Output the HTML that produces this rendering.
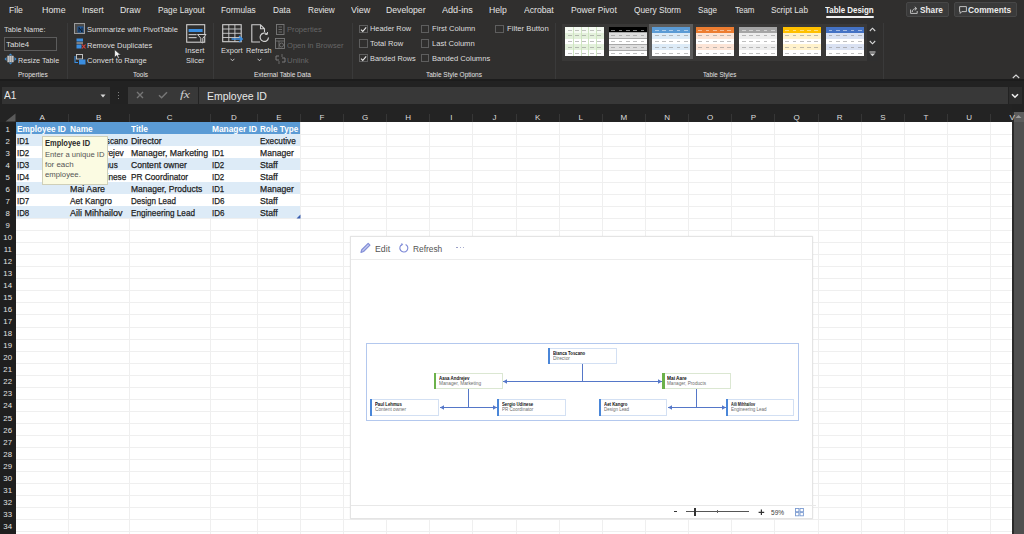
<!DOCTYPE html>
<html><head><meta charset="utf-8"><style>
html,body{margin:0;padding:0;width:1024px;height:534px;overflow:hidden;background:#302f2e;font-family:"Liberation Sans",sans-serif}
</style></head><body>
<div style="position:relative;width:1024px;height:534px;overflow:hidden">
<div style="position:absolute;left:0.00px;top:0.00px;width:1024.00px;height:80.00px;background:#302f2e"></div>
<div style="position:absolute;left:0.00px;top:80.00px;width:1024.00px;height:32.00px;background:#222222"></div>
<div style="position:absolute;left:0.00px;top:79.00px;width:1024.00px;height:1.50px;background:#1c1c1c"></div>
<div style="position:absolute;left:2.00px;top:86.80px;width:107.50px;height:17.40px;background:#333333"></div>
<div style="position:absolute;left:128.30px;top:86.80px;width:69.40px;height:17.40px;background:#383838"></div>
<div style="position:absolute;left:199.30px;top:86.80px;width:809.20px;height:17.40px;background:#383838"></div>
<div style="position:absolute;left:1008.50px;top:86.80px;width:13.50px;height:17.40px;background:#2d2d2d"></div>
<div style="position:absolute;left:0.00px;top:104.20px;width:1012.00px;height:17.80px;background:#232323"></div>
<div style="position:absolute;left:0.00px;top:122.00px;width:16.00px;height:412.00px;background:#1f1f1f"></div>
<div style="position:absolute;left:16.00px;top:122.00px;width:996.00px;height:412.00px;background:#ffffff"></div>
<div style="position:absolute;left:1012.00px;top:111.80px;width:12.00px;height:422.20px;background:#4f4f4f"></div>
<div style="position:absolute;left:1013.50px;top:111.80px;width:10.50px;height:10.20px;background:#5c5c5c"></div>
<div style="position:absolute;left:1012.00px;top:111.80px;width:1.50px;height:422.20px;background:#2a2a2a"></div>
<div style="position:absolute;left:9.01px;top:6.00px;font-family:'Liberation Sans';font-size:9.2px;font-weight:normal;font-style:normal;line-height:9.2px;color:#e4e4e4;white-space:nowrap;transform:scaleX(0.9368);transform-origin:0 0;">File</div>
<div style="position:absolute;left:41.60px;top:6.00px;font-family:'Liberation Sans';font-size:9.2px;font-weight:normal;font-style:normal;line-height:9.2px;color:#e4e4e4;white-space:nowrap;transform:scaleX(0.9625);transform-origin:0 0;">Home</div>
<div style="position:absolute;left:82.21px;top:6.00px;font-family:'Liberation Sans';font-size:9.2px;font-weight:normal;font-style:normal;line-height:9.2px;color:#e4e4e4;white-space:nowrap;transform:scaleX(0.9433);transform-origin:0 0;">Insert</div>
<div style="position:absolute;left:120.10px;top:6.00px;font-family:'Liberation Sans';font-size:9.2px;font-weight:normal;font-style:normal;line-height:9.2px;color:#e4e4e4;white-space:nowrap;transform:scaleX(0.9551);transform-origin:0 0;">Draw</div>
<div style="position:absolute;left:157.63px;top:6.00px;font-family:'Liberation Sans';font-size:9.2px;font-weight:normal;font-style:normal;line-height:9.2px;color:#e4e4e4;white-space:nowrap;transform:scaleX(0.9009);transform-origin:0 0;">Page Layout</div>
<div style="position:absolute;left:221.37px;top:6.00px;font-family:'Liberation Sans';font-size:9.2px;font-weight:normal;font-style:normal;line-height:9.2px;color:#e4e4e4;white-space:nowrap;transform:scaleX(0.9074);transform-origin:0 0;">Formulas</div>
<div style="position:absolute;left:273.38px;top:6.00px;font-family:'Liberation Sans';font-size:9.2px;font-weight:normal;font-style:normal;line-height:9.2px;color:#e4e4e4;white-space:nowrap;transform:scaleX(0.9008);transform-origin:0 0;">Data</div>
<div style="position:absolute;left:307.63px;top:6.00px;font-family:'Liberation Sans';font-size:9.2px;font-weight:normal;font-style:normal;line-height:9.2px;color:#e4e4e4;white-space:nowrap;transform:scaleX(0.8875);transform-origin:0 0;">Review</div>
<div style="position:absolute;left:350.60px;top:6.00px;font-family:'Liberation Sans';font-size:9.2px;font-weight:normal;font-style:normal;line-height:9.2px;color:#e4e4e4;white-space:nowrap;transform:scaleX(0.9777);transform-origin:0 0;">View</div>
<div style="position:absolute;left:385.86px;top:6.00px;font-family:'Liberation Sans';font-size:9.2px;font-weight:normal;font-style:normal;line-height:9.2px;color:#e4e4e4;white-space:nowrap;transform:scaleX(0.9437);transform-origin:0 0;">Developer</div>
<div style="position:absolute;left:441.59px;top:6.00px;font-family:'Liberation Sans';font-size:9.2px;font-weight:normal;font-style:normal;line-height:9.2px;color:#e4e4e4;white-space:nowrap;transform:scaleX(0.9892);transform-origin:0 0;">Add-ins</div>
<div style="position:absolute;left:488.61px;top:6.00px;font-family:'Liberation Sans';font-size:9.2px;font-weight:normal;font-style:normal;line-height:9.2px;color:#e4e4e4;white-space:nowrap;transform:scaleX(0.9404);transform-origin:0 0;">Help</div>
<div style="position:absolute;left:523.61px;top:6.00px;font-family:'Liberation Sans';font-size:9.2px;font-weight:normal;font-style:normal;line-height:9.2px;color:#e4e4e4;white-space:nowrap;transform:scaleX(0.9402);transform-origin:0 0;">Acrobat</div>
<div style="position:absolute;left:570.61px;top:6.00px;font-family:'Liberation Sans';font-size:9.2px;font-weight:normal;font-style:normal;line-height:9.2px;color:#e4e4e4;white-space:nowrap;transform:scaleX(0.9335);transform-origin:0 0;">Power Pivot</div>
<div style="position:absolute;left:634.13px;top:6.00px;font-family:'Liberation Sans';font-size:9.2px;font-weight:normal;font-style:normal;line-height:9.2px;color:#e4e4e4;white-space:nowrap;transform:scaleX(0.9024);transform-origin:0 0;">Query Storm</div>
<div style="position:absolute;left:698.38px;top:6.00px;font-family:'Liberation Sans';font-size:9.2px;font-weight:normal;font-style:normal;line-height:9.2px;color:#e4e4e4;white-space:nowrap;transform:scaleX(0.8842);transform-origin:0 0;">Sage</div>
<div style="position:absolute;left:734.64px;top:6.00px;font-family:'Liberation Sans';font-size:9.2px;font-weight:normal;font-style:normal;line-height:9.2px;color:#e4e4e4;white-space:nowrap;transform:scaleX(0.8664);transform-origin:0 0;">Team</div>
<div style="position:absolute;left:771.38px;top:6.00px;font-family:'Liberation Sans';font-size:9.2px;font-weight:normal;font-style:normal;line-height:9.2px;color:#e4e4e4;white-space:nowrap;transform:scaleX(0.8940);transform-origin:0 0;">Script Lab</div>
<div style="position:absolute;left:825.39px;top:6.00px;font-family:'Liberation Sans';font-size:9.2px;font-weight:bold;font-style:normal;line-height:9.2px;color:#f4f4f4;white-space:nowrap;transform:scaleX(0.8622);transform-origin:0 0;">Table Design</div>
<div style="position:absolute;left:825.50px;top:15.80px;width:48.50px;height:1.80px;background:#f0f0f0;border-radius:1px"></div>
<div style="position:absolute;left:905.70px;top:2.00px;width:43.20px;height:15.00px;background:#3a3a3a;border:1px solid #474747;border-radius:2px;box-sizing:border-box"></div>
<div style="position:absolute;left:953.50px;top:2.00px;width:63.50px;height:15.00px;background:#3a3a3a;border:1px solid #474747;border-radius:2px;box-sizing:border-box"></div>
<div style="position:absolute;left:920.43px;top:6.00px;font-family:'Liberation Sans';font-size:8.7px;font-weight:bold;font-style:normal;line-height:8.7px;color:#ececec;white-space:nowrap;transform:scaleX(0.9498);transform-origin:0 0;">Share</div>
<div style="position:absolute;left:968.12px;top:6.00px;font-family:'Liberation Sans';font-size:8.7px;font-weight:bold;font-style:normal;line-height:8.7px;color:#ececec;white-space:nowrap;transform:scaleX(0.9632);transform-origin:0 0;">Comments</div>
<div style="position:absolute;left:4.42px;top:26.00px;font-family:'Liberation Sans';font-size:7.6px;font-weight:normal;font-style:normal;line-height:7.6px;color:#dedede;white-space:nowrap;transform:scaleX(0.9736);transform-origin:0 0;">Table Name:</div>
<div style="position:absolute;left:4.00px;top:37.00px;width:53.00px;height:14.00px;border:1px solid #5c5c5c;background:#2d2c2b;box-sizing:border-box"></div>
<div style="position:absolute;left:5.65px;top:41.00px;font-family:'Liberation Sans';font-size:7.6px;font-weight:normal;font-style:normal;line-height:7.6px;color:#dedede;white-space:nowrap;transform:scaleX(1.0365);transform-origin:0 0;">Table4</div>
<div style="position:absolute;left:17.68px;top:57.00px;font-family:'Liberation Sans';font-size:7.6px;font-weight:normal;font-style:normal;line-height:7.6px;color:#dedede;white-space:nowrap;transform:scaleX(0.9494);transform-origin:0 0;">Resize Table</div>
<div style="position:absolute;left:18.46px;top:71.00px;font-family:'Liberation Sans';font-size:7.2px;font-weight:normal;font-style:normal;line-height:7.2px;color:#e2e2e2;white-space:nowrap;transform:scaleX(0.9076);transform-origin:0 0;">Properties</div>
<div style="position:absolute;left:67.00px;top:23.00px;width:1.00px;height:56.00px;background:#3a3a3a"></div>
<div style="position:absolute;left:86.66px;top:26.00px;font-family:'Liberation Sans';font-size:7.6px;font-weight:normal;font-style:normal;line-height:7.6px;color:#dedede;white-space:nowrap;transform:scaleX(0.9979);transform-origin:0 0;">Summarize with PivotTable</div>
<div style="position:absolute;left:86.66px;top:42.00px;font-family:'Liberation Sans';font-size:7.6px;font-weight:normal;font-style:normal;line-height:7.6px;color:#dedede;white-space:nowrap;transform:scaleX(0.9899);transform-origin:0 0;">Remove Duplicates</div>
<div style="position:absolute;left:86.66px;top:57.00px;font-family:'Liberation Sans';font-size:7.6px;font-weight:normal;font-style:normal;line-height:7.6px;color:#dedede;white-space:nowrap;transform:scaleX(1.0026);transform-origin:0 0;">Convert to Range</div>
<div style="position:absolute;left:185.25px;top:47.00px;font-family:'Liberation Sans';font-size:7.6px;font-weight:normal;font-style:normal;line-height:7.6px;color:#dedede;white-space:nowrap;transform:scaleX(1.0210);transform-origin:0 0;">Insert</div>
<div style="position:absolute;left:185.57px;top:57.00px;font-family:'Liberation Sans';font-size:7.6px;font-weight:normal;font-style:normal;line-height:7.6px;color:#dedede;white-space:nowrap;transform:scaleX(0.9773);transform-origin:0 0;">Slicer</div>
<div style="position:absolute;left:133.21px;top:71.00px;font-family:'Liberation Sans';font-size:7.2px;font-weight:normal;font-style:normal;line-height:7.2px;color:#e2e2e2;white-space:nowrap;transform:scaleX(0.8988);transform-origin:0 0;">Tools</div>
<div style="position:absolute;left:212.50px;top:23.00px;width:1.00px;height:56.00px;background:#3a3a3a"></div>
<div style="position:absolute;left:220.66px;top:47.00px;font-family:'Liberation Sans';font-size:7.6px;font-weight:normal;font-style:normal;line-height:7.6px;color:#dedede;white-space:nowrap;transform:scaleX(0.9873);transform-origin:0 0;">Export</div>
<div style="position:absolute;left:245.67px;top:47.00px;font-family:'Liberation Sans';font-size:7.6px;font-weight:normal;font-style:normal;line-height:7.6px;color:#dedede;white-space:nowrap;transform:scaleX(0.9649);transform-origin:0 0;">Refresh</div>
<div style="position:absolute;left:286.56px;top:26.00px;font-family:'Liberation Sans';font-size:7.6px;font-weight:normal;font-style:normal;line-height:7.6px;color:#666;white-space:nowrap;transform:scaleX(1.0047);transform-origin:0 0;">Properties</div>
<div style="position:absolute;left:286.66px;top:42.00px;font-family:'Liberation Sans';font-size:7.6px;font-weight:normal;font-style:normal;line-height:7.6px;color:#666;white-space:nowrap;transform:scaleX(0.9986);transform-origin:0 0;">Open in Browser</div>
<div style="position:absolute;left:286.65px;top:57.00px;font-family:'Liberation Sans';font-size:7.6px;font-weight:normal;font-style:normal;line-height:7.6px;color:#666;white-space:nowrap;transform:scaleX(1.0281);transform-origin:0 0;">Unlink</div>
<div style="position:absolute;left:254.21px;top:71.00px;font-family:'Liberation Sans';font-size:7.2px;font-weight:normal;font-style:normal;line-height:7.2px;color:#e2e2e2;white-space:nowrap;transform:scaleX(0.9086);transform-origin:0 0;">External Table Data</div>
<div style="position:absolute;left:351.50px;top:23.00px;width:1.00px;height:56.00px;background:#3a3a3a"></div>
<div style="position:absolute;left:370.17px;top:25.00px;font-family:'Liberation Sans';font-size:7.6px;font-weight:normal;font-style:normal;line-height:7.6px;color:#dedede;white-space:nowrap;transform:scaleX(0.9751);transform-origin:0 0;">Header Row</div>
<div style="position:absolute;left:370.16px;top:40.00px;font-family:'Liberation Sans';font-size:7.6px;font-weight:normal;font-style:normal;line-height:7.6px;color:#dedede;white-space:nowrap;transform:scaleX(0.9951);transform-origin:0 0;">Total Row</div>
<div style="position:absolute;left:370.17px;top:55.00px;font-family:'Liberation Sans';font-size:7.6px;font-weight:normal;font-style:normal;line-height:7.6px;color:#dedede;white-space:nowrap;transform:scaleX(0.9679);transform-origin:0 0;">Banded Rows</div>
<div style="position:absolute;left:431.66px;top:25.00px;font-family:'Liberation Sans';font-size:7.6px;font-weight:normal;font-style:normal;line-height:7.6px;color:#dedede;white-space:nowrap;transform:scaleX(1.0080);transform-origin:0 0;">First Column</div>
<div style="position:absolute;left:431.66px;top:40.00px;font-family:'Liberation Sans';font-size:7.6px;font-weight:normal;font-style:normal;line-height:7.6px;color:#dedede;white-space:nowrap;transform:scaleX(1.0010);transform-origin:0 0;">Last Column</div>
<div style="position:absolute;left:431.66px;top:55.00px;font-family:'Liberation Sans';font-size:7.6px;font-weight:normal;font-style:normal;line-height:7.6px;color:#dedede;white-space:nowrap;transform:scaleX(0.9986);transform-origin:0 0;">Banded Columns</div>
<div style="position:absolute;left:506.65px;top:25.00px;font-family:'Liberation Sans';font-size:7.6px;font-weight:normal;font-style:normal;line-height:7.6px;color:#dedede;white-space:nowrap;transform:scaleX(1.0181);transform-origin:0 0;">Filter Button</div>
<div style="position:absolute;left:426.01px;top:71.00px;font-family:'Liberation Sans';font-size:7.2px;font-weight:normal;font-style:normal;line-height:7.2px;color:#e2e2e2;white-space:nowrap;transform:scaleX(0.9039);transform-origin:0 0;">Table Style Options</div>
<div style="position:absolute;left:359.20px;top:24.60px;width:8.50px;height:8.50px;border:1px solid #5e5e5e;box-sizing:border-box"></div>
<svg style="position:absolute;left:359.2px;top:24.6px" width="9" height="9" viewBox="0 0 9 9"><path d="M2 4.6 L3.8 6.4 L7.2 2.4" stroke="#e8e8e8" stroke-width="1.1" fill="none"/></svg>
<div style="position:absolute;left:359.20px;top:39.00px;width:8.50px;height:8.50px;border:1px solid #5e5e5e;box-sizing:border-box"></div>
<div style="position:absolute;left:359.20px;top:53.90px;width:8.50px;height:8.50px;border:1px solid #5e5e5e;box-sizing:border-box"></div>
<svg style="position:absolute;left:359.2px;top:53.9px" width="9" height="9" viewBox="0 0 9 9"><path d="M2 4.6 L3.8 6.4 L7.2 2.4" stroke="#e8e8e8" stroke-width="1.1" fill="none"/></svg>
<div style="position:absolute;left:420.80px;top:24.60px;width:8.50px;height:8.50px;border:1px solid #5e5e5e;box-sizing:border-box"></div>
<div style="position:absolute;left:420.80px;top:39.00px;width:8.50px;height:8.50px;border:1px solid #5e5e5e;box-sizing:border-box"></div>
<div style="position:absolute;left:420.80px;top:53.90px;width:8.50px;height:8.50px;border:1px solid #5e5e5e;box-sizing:border-box"></div>
<div style="position:absolute;left:495.00px;top:24.60px;width:8.50px;height:8.50px;border:1px solid #5e5e5e;box-sizing:border-box"></div>
<div style="position:absolute;left:555.00px;top:23.00px;width:1.00px;height:56.00px;background:#3a3a3a"></div>
<div style="position:absolute;left:561.70px;top:23.50px;width:305.30px;height:37.00px;background:#393837"></div>
<div style="position:absolute;left:867.00px;top:23.50px;width:10.60px;height:37.00px;background:#2f2f2f"></div>
<div style="position:absolute;left:649.40px;top:24.10px;width:43.50px;height:34.50px;background:#5c5c5c"></div>
<div style="position:absolute;left:703.02px;top:71.00px;font-family:'Liberation Sans';font-size:7.2px;font-weight:normal;font-style:normal;line-height:7.2px;color:#e2e2e2;white-space:nowrap;transform:scaleX(0.8579);transform-origin:0 0;">Table Styles</div>
<div style="position:absolute;left:883.00px;top:23.00px;width:1.00px;height:56.00px;background:#3a3a3a"></div>
<div style="position:absolute;left:565.3px;top:27.2px;width:38.3px;height:28.8px;background:#fff;overflow:hidden"><div style="position:absolute;left:0;top:0.00px;width:38.3px;height:5.60px;background:#f6fbf3"></div><div style="position:absolute;left:2.60px;top:2.40px;width:3.8px;height:0.8px;background:#8a8a8a;opacity:.5"></div><div style="position:absolute;left:9.90px;top:2.40px;width:3.8px;height:0.8px;background:#8a8a8a;opacity:.5"></div><div style="position:absolute;left:17.20px;top:2.40px;width:3.8px;height:0.8px;background:#8a8a8a;opacity:.5"></div><div style="position:absolute;left:24.50px;top:2.40px;width:3.8px;height:0.8px;background:#8a8a8a;opacity:.5"></div><div style="position:absolute;left:31.80px;top:2.40px;width:3.8px;height:0.8px;background:#8a8a8a;opacity:.5"></div><div style="position:absolute;left:0;top:5.60px;width:38.3px;height:5.80px;background:#e4f1dc"></div><div style="position:absolute;left:2.60px;top:8.10px;width:3.8px;height:0.8px;background:#8a8a8a;opacity:.55"></div><div style="position:absolute;left:9.90px;top:8.10px;width:3.8px;height:0.8px;background:#8a8a8a;opacity:.55"></div><div style="position:absolute;left:17.20px;top:8.10px;width:3.8px;height:0.8px;background:#8a8a8a;opacity:.55"></div><div style="position:absolute;left:24.50px;top:8.10px;width:3.8px;height:0.8px;background:#8a8a8a;opacity:.55"></div><div style="position:absolute;left:31.80px;top:8.10px;width:3.8px;height:0.8px;background:#8a8a8a;opacity:.55"></div><div style="position:absolute;left:0;top:11.40px;width:38.3px;height:5.80px;background:#fff"></div><div style="position:absolute;left:2.60px;top:13.90px;width:3.8px;height:0.8px;background:#8a8a8a;opacity:.55"></div><div style="position:absolute;left:9.90px;top:13.90px;width:3.8px;height:0.8px;background:#8a8a8a;opacity:.55"></div><div style="position:absolute;left:17.20px;top:13.90px;width:3.8px;height:0.8px;background:#8a8a8a;opacity:.55"></div><div style="position:absolute;left:24.50px;top:13.90px;width:3.8px;height:0.8px;background:#8a8a8a;opacity:.55"></div><div style="position:absolute;left:31.80px;top:13.90px;width:3.8px;height:0.8px;background:#8a8a8a;opacity:.55"></div><div style="position:absolute;left:0;top:17.20px;width:38.3px;height:5.80px;background:#e4f1dc"></div><div style="position:absolute;left:2.60px;top:19.70px;width:3.8px;height:0.8px;background:#8a8a8a;opacity:.55"></div><div style="position:absolute;left:9.90px;top:19.70px;width:3.8px;height:0.8px;background:#8a8a8a;opacity:.55"></div><div style="position:absolute;left:17.20px;top:19.70px;width:3.8px;height:0.8px;background:#8a8a8a;opacity:.55"></div><div style="position:absolute;left:24.50px;top:19.70px;width:3.8px;height:0.8px;background:#8a8a8a;opacity:.55"></div><div style="position:absolute;left:31.80px;top:19.70px;width:3.8px;height:0.8px;background:#8a8a8a;opacity:.55"></div><div style="position:absolute;left:0;top:23.00px;width:38.3px;height:5.80px;background:#fff"></div><div style="position:absolute;left:2.60px;top:25.50px;width:3.8px;height:0.8px;background:#8a8a8a;opacity:.55"></div><div style="position:absolute;left:9.90px;top:25.50px;width:3.8px;height:0.8px;background:#8a8a8a;opacity:.55"></div><div style="position:absolute;left:17.20px;top:25.50px;width:3.8px;height:0.8px;background:#8a8a8a;opacity:.55"></div><div style="position:absolute;left:24.50px;top:25.50px;width:3.8px;height:0.8px;background:#8a8a8a;opacity:.55"></div><div style="position:absolute;left:31.80px;top:25.50px;width:3.8px;height:0.8px;background:#8a8a8a;opacity:.55"></div><div style="position:absolute;left:7.66px;top:0;width:0.8px;height:28.8px;background:#cfe5c1"></div><div style="position:absolute;left:15.32px;top:0;width:0.8px;height:28.8px;background:#cfe5c1"></div><div style="position:absolute;left:22.98px;top:0;width:0.8px;height:28.8px;background:#cfe5c1"></div><div style="position:absolute;left:30.64px;top:0;width:0.8px;height:28.8px;background:#cfe5c1"></div></div>
<div style="position:absolute;left:608.8px;top:27.2px;width:38.3px;height:28.8px;background:#fff;overflow:hidden"><div style="position:absolute;left:0;top:0.00px;width:38.3px;height:5.60px;background:#000000"></div><div style="position:absolute;left:2.60px;top:2.40px;width:3.8px;height:0.8px;background:#ffffff;opacity:.5"></div><div style="position:absolute;left:9.90px;top:2.40px;width:3.8px;height:0.8px;background:#ffffff;opacity:.5"></div><div style="position:absolute;left:17.20px;top:2.40px;width:3.8px;height:0.8px;background:#ffffff;opacity:.5"></div><div style="position:absolute;left:24.50px;top:2.40px;width:3.8px;height:0.8px;background:#ffffff;opacity:.5"></div><div style="position:absolute;left:31.80px;top:2.40px;width:3.8px;height:0.8px;background:#ffffff;opacity:.5"></div><div style="position:absolute;left:0;top:5.60px;width:38.3px;height:5.80px;background:#dedede"></div><div style="position:absolute;left:0;top:5.20px;width:38.3px;height:0.8px;background:#a8a8a8"></div><div style="position:absolute;left:2.60px;top:8.10px;width:3.8px;height:0.8px;background:#8a8a8a;opacity:.55"></div><div style="position:absolute;left:9.90px;top:8.10px;width:3.8px;height:0.8px;background:#8a8a8a;opacity:.55"></div><div style="position:absolute;left:17.20px;top:8.10px;width:3.8px;height:0.8px;background:#8a8a8a;opacity:.55"></div><div style="position:absolute;left:24.50px;top:8.10px;width:3.8px;height:0.8px;background:#8a8a8a;opacity:.55"></div><div style="position:absolute;left:31.80px;top:8.10px;width:3.8px;height:0.8px;background:#8a8a8a;opacity:.55"></div><div style="position:absolute;left:0;top:11.40px;width:38.3px;height:5.80px;background:#fff"></div><div style="position:absolute;left:0;top:11.00px;width:38.3px;height:0.8px;background:#a8a8a8"></div><div style="position:absolute;left:2.60px;top:13.90px;width:3.8px;height:0.8px;background:#8a8a8a;opacity:.55"></div><div style="position:absolute;left:9.90px;top:13.90px;width:3.8px;height:0.8px;background:#8a8a8a;opacity:.55"></div><div style="position:absolute;left:17.20px;top:13.90px;width:3.8px;height:0.8px;background:#8a8a8a;opacity:.55"></div><div style="position:absolute;left:24.50px;top:13.90px;width:3.8px;height:0.8px;background:#8a8a8a;opacity:.55"></div><div style="position:absolute;left:31.80px;top:13.90px;width:3.8px;height:0.8px;background:#8a8a8a;opacity:.55"></div><div style="position:absolute;left:0;top:17.20px;width:38.3px;height:5.80px;background:#dedede"></div><div style="position:absolute;left:0;top:16.80px;width:38.3px;height:0.8px;background:#a8a8a8"></div><div style="position:absolute;left:2.60px;top:19.70px;width:3.8px;height:0.8px;background:#8a8a8a;opacity:.55"></div><div style="position:absolute;left:9.90px;top:19.70px;width:3.8px;height:0.8px;background:#8a8a8a;opacity:.55"></div><div style="position:absolute;left:17.20px;top:19.70px;width:3.8px;height:0.8px;background:#8a8a8a;opacity:.55"></div><div style="position:absolute;left:24.50px;top:19.70px;width:3.8px;height:0.8px;background:#8a8a8a;opacity:.55"></div><div style="position:absolute;left:31.80px;top:19.70px;width:3.8px;height:0.8px;background:#8a8a8a;opacity:.55"></div><div style="position:absolute;left:0;top:23.00px;width:38.3px;height:5.80px;background:#fff"></div><div style="position:absolute;left:0;top:22.60px;width:38.3px;height:0.8px;background:#a8a8a8"></div><div style="position:absolute;left:2.60px;top:25.50px;width:3.8px;height:0.8px;background:#8a8a8a;opacity:.55"></div><div style="position:absolute;left:9.90px;top:25.50px;width:3.8px;height:0.8px;background:#8a8a8a;opacity:.55"></div><div style="position:absolute;left:17.20px;top:25.50px;width:3.8px;height:0.8px;background:#8a8a8a;opacity:.55"></div><div style="position:absolute;left:24.50px;top:25.50px;width:3.8px;height:0.8px;background:#8a8a8a;opacity:.55"></div><div style="position:absolute;left:31.80px;top:25.50px;width:3.8px;height:0.8px;background:#8a8a8a;opacity:.55"></div></div>
<div style="position:absolute;left:652.2px;top:27.2px;width:38.3px;height:28.8px;background:#fff;overflow:hidden"><div style="position:absolute;left:0;top:0.00px;width:38.3px;height:5.60px;background:#5b9bd5"></div><div style="position:absolute;left:2.60px;top:2.40px;width:3.8px;height:0.8px;background:#ffffff;opacity:.5"></div><div style="position:absolute;left:9.90px;top:2.40px;width:3.8px;height:0.8px;background:#ffffff;opacity:.5"></div><div style="position:absolute;left:17.20px;top:2.40px;width:3.8px;height:0.8px;background:#ffffff;opacity:.5"></div><div style="position:absolute;left:24.50px;top:2.40px;width:3.8px;height:0.8px;background:#ffffff;opacity:.5"></div><div style="position:absolute;left:31.80px;top:2.40px;width:3.8px;height:0.8px;background:#ffffff;opacity:.5"></div><div style="position:absolute;left:0;top:5.60px;width:38.3px;height:5.80px;background:#ddebf7"></div><div style="position:absolute;left:2.60px;top:8.10px;width:3.8px;height:0.8px;background:#8a8a8a;opacity:.55"></div><div style="position:absolute;left:9.90px;top:8.10px;width:3.8px;height:0.8px;background:#8a8a8a;opacity:.55"></div><div style="position:absolute;left:17.20px;top:8.10px;width:3.8px;height:0.8px;background:#8a8a8a;opacity:.55"></div><div style="position:absolute;left:24.50px;top:8.10px;width:3.8px;height:0.8px;background:#8a8a8a;opacity:.55"></div><div style="position:absolute;left:31.80px;top:8.10px;width:3.8px;height:0.8px;background:#8a8a8a;opacity:.55"></div><div style="position:absolute;left:0;top:11.40px;width:38.3px;height:5.80px;background:#fff"></div><div style="position:absolute;left:2.60px;top:13.90px;width:3.8px;height:0.8px;background:#8a8a8a;opacity:.55"></div><div style="position:absolute;left:9.90px;top:13.90px;width:3.8px;height:0.8px;background:#8a8a8a;opacity:.55"></div><div style="position:absolute;left:17.20px;top:13.90px;width:3.8px;height:0.8px;background:#8a8a8a;opacity:.55"></div><div style="position:absolute;left:24.50px;top:13.90px;width:3.8px;height:0.8px;background:#8a8a8a;opacity:.55"></div><div style="position:absolute;left:31.80px;top:13.90px;width:3.8px;height:0.8px;background:#8a8a8a;opacity:.55"></div><div style="position:absolute;left:0;top:17.20px;width:38.3px;height:5.80px;background:#ddebf7"></div><div style="position:absolute;left:2.60px;top:19.70px;width:3.8px;height:0.8px;background:#8a8a8a;opacity:.55"></div><div style="position:absolute;left:9.90px;top:19.70px;width:3.8px;height:0.8px;background:#8a8a8a;opacity:.55"></div><div style="position:absolute;left:17.20px;top:19.70px;width:3.8px;height:0.8px;background:#8a8a8a;opacity:.55"></div><div style="position:absolute;left:24.50px;top:19.70px;width:3.8px;height:0.8px;background:#8a8a8a;opacity:.55"></div><div style="position:absolute;left:31.80px;top:19.70px;width:3.8px;height:0.8px;background:#8a8a8a;opacity:.55"></div><div style="position:absolute;left:0;top:23.00px;width:38.3px;height:5.80px;background:#fff"></div><div style="position:absolute;left:2.60px;top:25.50px;width:3.8px;height:0.8px;background:#8a8a8a;opacity:.55"></div><div style="position:absolute;left:9.90px;top:25.50px;width:3.8px;height:0.8px;background:#8a8a8a;opacity:.55"></div><div style="position:absolute;left:17.20px;top:25.50px;width:3.8px;height:0.8px;background:#8a8a8a;opacity:.55"></div><div style="position:absolute;left:24.50px;top:25.50px;width:3.8px;height:0.8px;background:#8a8a8a;opacity:.55"></div><div style="position:absolute;left:31.80px;top:25.50px;width:3.8px;height:0.8px;background:#8a8a8a;opacity:.55"></div></div>
<div style="position:absolute;left:695.7px;top:27.2px;width:38.3px;height:28.8px;background:#fff;overflow:hidden"><div style="position:absolute;left:0;top:0.00px;width:38.3px;height:5.60px;background:#ed7d31"></div><div style="position:absolute;left:2.60px;top:2.40px;width:3.8px;height:0.8px;background:#ffffff;opacity:.5"></div><div style="position:absolute;left:9.90px;top:2.40px;width:3.8px;height:0.8px;background:#ffffff;opacity:.5"></div><div style="position:absolute;left:17.20px;top:2.40px;width:3.8px;height:0.8px;background:#ffffff;opacity:.5"></div><div style="position:absolute;left:24.50px;top:2.40px;width:3.8px;height:0.8px;background:#ffffff;opacity:.5"></div><div style="position:absolute;left:31.80px;top:2.40px;width:3.8px;height:0.8px;background:#ffffff;opacity:.5"></div><div style="position:absolute;left:0;top:5.60px;width:38.3px;height:5.80px;background:#fce4d6"></div><div style="position:absolute;left:2.60px;top:8.10px;width:3.8px;height:0.8px;background:#8a8a8a;opacity:.55"></div><div style="position:absolute;left:9.90px;top:8.10px;width:3.8px;height:0.8px;background:#8a8a8a;opacity:.55"></div><div style="position:absolute;left:17.20px;top:8.10px;width:3.8px;height:0.8px;background:#8a8a8a;opacity:.55"></div><div style="position:absolute;left:24.50px;top:8.10px;width:3.8px;height:0.8px;background:#8a8a8a;opacity:.55"></div><div style="position:absolute;left:31.80px;top:8.10px;width:3.8px;height:0.8px;background:#8a8a8a;opacity:.55"></div><div style="position:absolute;left:0;top:11.40px;width:38.3px;height:5.80px;background:#fff"></div><div style="position:absolute;left:2.60px;top:13.90px;width:3.8px;height:0.8px;background:#8a8a8a;opacity:.55"></div><div style="position:absolute;left:9.90px;top:13.90px;width:3.8px;height:0.8px;background:#8a8a8a;opacity:.55"></div><div style="position:absolute;left:17.20px;top:13.90px;width:3.8px;height:0.8px;background:#8a8a8a;opacity:.55"></div><div style="position:absolute;left:24.50px;top:13.90px;width:3.8px;height:0.8px;background:#8a8a8a;opacity:.55"></div><div style="position:absolute;left:31.80px;top:13.90px;width:3.8px;height:0.8px;background:#8a8a8a;opacity:.55"></div><div style="position:absolute;left:0;top:17.20px;width:38.3px;height:5.80px;background:#fce4d6"></div><div style="position:absolute;left:2.60px;top:19.70px;width:3.8px;height:0.8px;background:#8a8a8a;opacity:.55"></div><div style="position:absolute;left:9.90px;top:19.70px;width:3.8px;height:0.8px;background:#8a8a8a;opacity:.55"></div><div style="position:absolute;left:17.20px;top:19.70px;width:3.8px;height:0.8px;background:#8a8a8a;opacity:.55"></div><div style="position:absolute;left:24.50px;top:19.70px;width:3.8px;height:0.8px;background:#8a8a8a;opacity:.55"></div><div style="position:absolute;left:31.80px;top:19.70px;width:3.8px;height:0.8px;background:#8a8a8a;opacity:.55"></div><div style="position:absolute;left:0;top:23.00px;width:38.3px;height:5.80px;background:#fff"></div><div style="position:absolute;left:2.60px;top:25.50px;width:3.8px;height:0.8px;background:#8a8a8a;opacity:.55"></div><div style="position:absolute;left:9.90px;top:25.50px;width:3.8px;height:0.8px;background:#8a8a8a;opacity:.55"></div><div style="position:absolute;left:17.20px;top:25.50px;width:3.8px;height:0.8px;background:#8a8a8a;opacity:.55"></div><div style="position:absolute;left:24.50px;top:25.50px;width:3.8px;height:0.8px;background:#8a8a8a;opacity:.55"></div><div style="position:absolute;left:31.80px;top:25.50px;width:3.8px;height:0.8px;background:#8a8a8a;opacity:.55"></div></div>
<div style="position:absolute;left:739.2px;top:27.2px;width:38.3px;height:28.8px;background:#fff;overflow:hidden"><div style="position:absolute;left:0;top:0.00px;width:38.3px;height:5.60px;background:#a5a5a5"></div><div style="position:absolute;left:2.60px;top:2.40px;width:3.8px;height:0.8px;background:#ffffff;opacity:.5"></div><div style="position:absolute;left:9.90px;top:2.40px;width:3.8px;height:0.8px;background:#ffffff;opacity:.5"></div><div style="position:absolute;left:17.20px;top:2.40px;width:3.8px;height:0.8px;background:#ffffff;opacity:.5"></div><div style="position:absolute;left:24.50px;top:2.40px;width:3.8px;height:0.8px;background:#ffffff;opacity:.5"></div><div style="position:absolute;left:31.80px;top:2.40px;width:3.8px;height:0.8px;background:#ffffff;opacity:.5"></div><div style="position:absolute;left:0;top:5.60px;width:38.3px;height:5.80px;background:#ededed"></div><div style="position:absolute;left:2.60px;top:8.10px;width:3.8px;height:0.8px;background:#8a8a8a;opacity:.55"></div><div style="position:absolute;left:9.90px;top:8.10px;width:3.8px;height:0.8px;background:#8a8a8a;opacity:.55"></div><div style="position:absolute;left:17.20px;top:8.10px;width:3.8px;height:0.8px;background:#8a8a8a;opacity:.55"></div><div style="position:absolute;left:24.50px;top:8.10px;width:3.8px;height:0.8px;background:#8a8a8a;opacity:.55"></div><div style="position:absolute;left:31.80px;top:8.10px;width:3.8px;height:0.8px;background:#8a8a8a;opacity:.55"></div><div style="position:absolute;left:0;top:11.40px;width:38.3px;height:5.80px;background:#fff"></div><div style="position:absolute;left:2.60px;top:13.90px;width:3.8px;height:0.8px;background:#8a8a8a;opacity:.55"></div><div style="position:absolute;left:9.90px;top:13.90px;width:3.8px;height:0.8px;background:#8a8a8a;opacity:.55"></div><div style="position:absolute;left:17.20px;top:13.90px;width:3.8px;height:0.8px;background:#8a8a8a;opacity:.55"></div><div style="position:absolute;left:24.50px;top:13.90px;width:3.8px;height:0.8px;background:#8a8a8a;opacity:.55"></div><div style="position:absolute;left:31.80px;top:13.90px;width:3.8px;height:0.8px;background:#8a8a8a;opacity:.55"></div><div style="position:absolute;left:0;top:17.20px;width:38.3px;height:5.80px;background:#ededed"></div><div style="position:absolute;left:2.60px;top:19.70px;width:3.8px;height:0.8px;background:#8a8a8a;opacity:.55"></div><div style="position:absolute;left:9.90px;top:19.70px;width:3.8px;height:0.8px;background:#8a8a8a;opacity:.55"></div><div style="position:absolute;left:17.20px;top:19.70px;width:3.8px;height:0.8px;background:#8a8a8a;opacity:.55"></div><div style="position:absolute;left:24.50px;top:19.70px;width:3.8px;height:0.8px;background:#8a8a8a;opacity:.55"></div><div style="position:absolute;left:31.80px;top:19.70px;width:3.8px;height:0.8px;background:#8a8a8a;opacity:.55"></div><div style="position:absolute;left:0;top:23.00px;width:38.3px;height:5.80px;background:#fff"></div><div style="position:absolute;left:2.60px;top:25.50px;width:3.8px;height:0.8px;background:#8a8a8a;opacity:.55"></div><div style="position:absolute;left:9.90px;top:25.50px;width:3.8px;height:0.8px;background:#8a8a8a;opacity:.55"></div><div style="position:absolute;left:17.20px;top:25.50px;width:3.8px;height:0.8px;background:#8a8a8a;opacity:.55"></div><div style="position:absolute;left:24.50px;top:25.50px;width:3.8px;height:0.8px;background:#8a8a8a;opacity:.55"></div><div style="position:absolute;left:31.80px;top:25.50px;width:3.8px;height:0.8px;background:#8a8a8a;opacity:.55"></div></div>
<div style="position:absolute;left:782.7px;top:27.2px;width:38.3px;height:28.8px;background:#fff;overflow:hidden"><div style="position:absolute;left:0;top:0.00px;width:38.3px;height:5.60px;background:#ffc000"></div><div style="position:absolute;left:2.60px;top:2.40px;width:3.8px;height:0.8px;background:#ffffff;opacity:.5"></div><div style="position:absolute;left:9.90px;top:2.40px;width:3.8px;height:0.8px;background:#ffffff;opacity:.5"></div><div style="position:absolute;left:17.20px;top:2.40px;width:3.8px;height:0.8px;background:#ffffff;opacity:.5"></div><div style="position:absolute;left:24.50px;top:2.40px;width:3.8px;height:0.8px;background:#ffffff;opacity:.5"></div><div style="position:absolute;left:31.80px;top:2.40px;width:3.8px;height:0.8px;background:#ffffff;opacity:.5"></div><div style="position:absolute;left:0;top:5.60px;width:38.3px;height:5.80px;background:#fff2cc"></div><div style="position:absolute;left:2.60px;top:8.10px;width:3.8px;height:0.8px;background:#8a8a8a;opacity:.55"></div><div style="position:absolute;left:9.90px;top:8.10px;width:3.8px;height:0.8px;background:#8a8a8a;opacity:.55"></div><div style="position:absolute;left:17.20px;top:8.10px;width:3.8px;height:0.8px;background:#8a8a8a;opacity:.55"></div><div style="position:absolute;left:24.50px;top:8.10px;width:3.8px;height:0.8px;background:#8a8a8a;opacity:.55"></div><div style="position:absolute;left:31.80px;top:8.10px;width:3.8px;height:0.8px;background:#8a8a8a;opacity:.55"></div><div style="position:absolute;left:0;top:11.40px;width:38.3px;height:5.80px;background:#fff"></div><div style="position:absolute;left:2.60px;top:13.90px;width:3.8px;height:0.8px;background:#8a8a8a;opacity:.55"></div><div style="position:absolute;left:9.90px;top:13.90px;width:3.8px;height:0.8px;background:#8a8a8a;opacity:.55"></div><div style="position:absolute;left:17.20px;top:13.90px;width:3.8px;height:0.8px;background:#8a8a8a;opacity:.55"></div><div style="position:absolute;left:24.50px;top:13.90px;width:3.8px;height:0.8px;background:#8a8a8a;opacity:.55"></div><div style="position:absolute;left:31.80px;top:13.90px;width:3.8px;height:0.8px;background:#8a8a8a;opacity:.55"></div><div style="position:absolute;left:0;top:17.20px;width:38.3px;height:5.80px;background:#fff2cc"></div><div style="position:absolute;left:2.60px;top:19.70px;width:3.8px;height:0.8px;background:#8a8a8a;opacity:.55"></div><div style="position:absolute;left:9.90px;top:19.70px;width:3.8px;height:0.8px;background:#8a8a8a;opacity:.55"></div><div style="position:absolute;left:17.20px;top:19.70px;width:3.8px;height:0.8px;background:#8a8a8a;opacity:.55"></div><div style="position:absolute;left:24.50px;top:19.70px;width:3.8px;height:0.8px;background:#8a8a8a;opacity:.55"></div><div style="position:absolute;left:31.80px;top:19.70px;width:3.8px;height:0.8px;background:#8a8a8a;opacity:.55"></div><div style="position:absolute;left:0;top:23.00px;width:38.3px;height:5.80px;background:#fff"></div><div style="position:absolute;left:2.60px;top:25.50px;width:3.8px;height:0.8px;background:#8a8a8a;opacity:.55"></div><div style="position:absolute;left:9.90px;top:25.50px;width:3.8px;height:0.8px;background:#8a8a8a;opacity:.55"></div><div style="position:absolute;left:17.20px;top:25.50px;width:3.8px;height:0.8px;background:#8a8a8a;opacity:.55"></div><div style="position:absolute;left:24.50px;top:25.50px;width:3.8px;height:0.8px;background:#8a8a8a;opacity:.55"></div><div style="position:absolute;left:31.80px;top:25.50px;width:3.8px;height:0.8px;background:#8a8a8a;opacity:.55"></div></div>
<div style="position:absolute;left:826.0px;top:27.2px;width:38.3px;height:28.8px;background:#fff;overflow:hidden"><div style="position:absolute;left:0;top:0.00px;width:38.3px;height:5.60px;background:#4472c4"></div><div style="position:absolute;left:2.60px;top:2.40px;width:3.8px;height:0.8px;background:#ffffff;opacity:.5"></div><div style="position:absolute;left:9.90px;top:2.40px;width:3.8px;height:0.8px;background:#ffffff;opacity:.5"></div><div style="position:absolute;left:17.20px;top:2.40px;width:3.8px;height:0.8px;background:#ffffff;opacity:.5"></div><div style="position:absolute;left:24.50px;top:2.40px;width:3.8px;height:0.8px;background:#ffffff;opacity:.5"></div><div style="position:absolute;left:31.80px;top:2.40px;width:3.8px;height:0.8px;background:#ffffff;opacity:.5"></div><div style="position:absolute;left:0;top:5.60px;width:38.3px;height:5.80px;background:#d9e1f2"></div><div style="position:absolute;left:2.60px;top:8.10px;width:3.8px;height:0.8px;background:#8a8a8a;opacity:.55"></div><div style="position:absolute;left:9.90px;top:8.10px;width:3.8px;height:0.8px;background:#8a8a8a;opacity:.55"></div><div style="position:absolute;left:17.20px;top:8.10px;width:3.8px;height:0.8px;background:#8a8a8a;opacity:.55"></div><div style="position:absolute;left:24.50px;top:8.10px;width:3.8px;height:0.8px;background:#8a8a8a;opacity:.55"></div><div style="position:absolute;left:31.80px;top:8.10px;width:3.8px;height:0.8px;background:#8a8a8a;opacity:.55"></div><div style="position:absolute;left:0;top:11.40px;width:38.3px;height:5.80px;background:#fff"></div><div style="position:absolute;left:2.60px;top:13.90px;width:3.8px;height:0.8px;background:#8a8a8a;opacity:.55"></div><div style="position:absolute;left:9.90px;top:13.90px;width:3.8px;height:0.8px;background:#8a8a8a;opacity:.55"></div><div style="position:absolute;left:17.20px;top:13.90px;width:3.8px;height:0.8px;background:#8a8a8a;opacity:.55"></div><div style="position:absolute;left:24.50px;top:13.90px;width:3.8px;height:0.8px;background:#8a8a8a;opacity:.55"></div><div style="position:absolute;left:31.80px;top:13.90px;width:3.8px;height:0.8px;background:#8a8a8a;opacity:.55"></div><div style="position:absolute;left:0;top:17.20px;width:38.3px;height:5.80px;background:#d9e1f2"></div><div style="position:absolute;left:2.60px;top:19.70px;width:3.8px;height:0.8px;background:#8a8a8a;opacity:.55"></div><div style="position:absolute;left:9.90px;top:19.70px;width:3.8px;height:0.8px;background:#8a8a8a;opacity:.55"></div><div style="position:absolute;left:17.20px;top:19.70px;width:3.8px;height:0.8px;background:#8a8a8a;opacity:.55"></div><div style="position:absolute;left:24.50px;top:19.70px;width:3.8px;height:0.8px;background:#8a8a8a;opacity:.55"></div><div style="position:absolute;left:31.80px;top:19.70px;width:3.8px;height:0.8px;background:#8a8a8a;opacity:.55"></div><div style="position:absolute;left:0;top:23.00px;width:38.3px;height:5.80px;background:#fff"></div><div style="position:absolute;left:2.60px;top:25.50px;width:3.8px;height:0.8px;background:#8a8a8a;opacity:.55"></div><div style="position:absolute;left:9.90px;top:25.50px;width:3.8px;height:0.8px;background:#8a8a8a;opacity:.55"></div><div style="position:absolute;left:17.20px;top:25.50px;width:3.8px;height:0.8px;background:#8a8a8a;opacity:.55"></div><div style="position:absolute;left:24.50px;top:25.50px;width:3.8px;height:0.8px;background:#8a8a8a;opacity:.55"></div><div style="position:absolute;left:31.80px;top:25.50px;width:3.8px;height:0.8px;background:#8a8a8a;opacity:.55"></div></div>
<div style="position:absolute;left:4.04px;top:90.00px;font-family:'Liberation Sans';font-size:10.6px;font-weight:normal;font-style:normal;line-height:10.6px;color:#e8e8e8;white-space:nowrap;transform:scaleX(0.9572);transform-origin:0 0;">A1</div>
<div style="position:absolute;left:206.93px;top:91.00px;font-family:'Liberation Sans';font-size:11px;font-weight:normal;font-style:normal;line-height:11px;color:#e8e8e8;white-space:nowrap;transform:scaleX(0.9517);transform-origin:0 0;">Employee ID</div>
<div style="position:absolute;left:16.00px;top:134.03px;width:996.00px;height:1.00px;background:#efefef"></div>
<div style="position:absolute;left:16.00px;top:146.06px;width:996.00px;height:1.00px;background:#efefef"></div>
<div style="position:absolute;left:16.00px;top:158.09px;width:996.00px;height:1.00px;background:#efefef"></div>
<div style="position:absolute;left:16.00px;top:170.12px;width:996.00px;height:1.00px;background:#efefef"></div>
<div style="position:absolute;left:16.00px;top:182.15px;width:996.00px;height:1.00px;background:#efefef"></div>
<div style="position:absolute;left:16.00px;top:194.18px;width:996.00px;height:1.00px;background:#efefef"></div>
<div style="position:absolute;left:16.00px;top:206.21px;width:996.00px;height:1.00px;background:#efefef"></div>
<div style="position:absolute;left:16.00px;top:218.24px;width:996.00px;height:1.00px;background:#efefef"></div>
<div style="position:absolute;left:16.00px;top:230.27px;width:996.00px;height:1.00px;background:#efefef"></div>
<div style="position:absolute;left:16.00px;top:242.30px;width:996.00px;height:1.00px;background:#efefef"></div>
<div style="position:absolute;left:16.00px;top:254.33px;width:996.00px;height:1.00px;background:#efefef"></div>
<div style="position:absolute;left:16.00px;top:266.36px;width:996.00px;height:1.00px;background:#efefef"></div>
<div style="position:absolute;left:16.00px;top:278.39px;width:996.00px;height:1.00px;background:#efefef"></div>
<div style="position:absolute;left:16.00px;top:290.42px;width:996.00px;height:1.00px;background:#efefef"></div>
<div style="position:absolute;left:16.00px;top:302.45px;width:996.00px;height:1.00px;background:#efefef"></div>
<div style="position:absolute;left:16.00px;top:314.48px;width:996.00px;height:1.00px;background:#efefef"></div>
<div style="position:absolute;left:16.00px;top:326.51px;width:996.00px;height:1.00px;background:#efefef"></div>
<div style="position:absolute;left:16.00px;top:338.54px;width:996.00px;height:1.00px;background:#efefef"></div>
<div style="position:absolute;left:16.00px;top:350.57px;width:996.00px;height:1.00px;background:#efefef"></div>
<div style="position:absolute;left:16.00px;top:362.60px;width:996.00px;height:1.00px;background:#efefef"></div>
<div style="position:absolute;left:16.00px;top:374.63px;width:996.00px;height:1.00px;background:#efefef"></div>
<div style="position:absolute;left:16.00px;top:386.66px;width:996.00px;height:1.00px;background:#efefef"></div>
<div style="position:absolute;left:16.00px;top:398.69px;width:996.00px;height:1.00px;background:#efefef"></div>
<div style="position:absolute;left:16.00px;top:410.72px;width:996.00px;height:1.00px;background:#efefef"></div>
<div style="position:absolute;left:16.00px;top:422.75px;width:996.00px;height:1.00px;background:#efefef"></div>
<div style="position:absolute;left:16.00px;top:434.78px;width:996.00px;height:1.00px;background:#efefef"></div>
<div style="position:absolute;left:16.00px;top:446.81px;width:996.00px;height:1.00px;background:#efefef"></div>
<div style="position:absolute;left:16.00px;top:458.84px;width:996.00px;height:1.00px;background:#efefef"></div>
<div style="position:absolute;left:16.00px;top:470.87px;width:996.00px;height:1.00px;background:#efefef"></div>
<div style="position:absolute;left:16.00px;top:482.90px;width:996.00px;height:1.00px;background:#efefef"></div>
<div style="position:absolute;left:16.00px;top:494.93px;width:996.00px;height:1.00px;background:#efefef"></div>
<div style="position:absolute;left:16.00px;top:506.96px;width:996.00px;height:1.00px;background:#efefef"></div>
<div style="position:absolute;left:16.00px;top:518.99px;width:996.00px;height:1.00px;background:#efefef"></div>
<div style="position:absolute;left:16.00px;top:531.02px;width:996.00px;height:1.00px;background:#efefef"></div>
<div style="position:absolute;left:68.00px;top:122.00px;width:1.00px;height:412.00px;background:#efefef"></div>
<div style="position:absolute;left:68.00px;top:113.50px;width:1.00px;height:8.50px;background:#363636"></div>
<div style="position:absolute;left:128.50px;top:122.00px;width:1.00px;height:412.00px;background:#efefef"></div>
<div style="position:absolute;left:128.50px;top:113.50px;width:1.00px;height:8.50px;background:#363636"></div>
<div style="position:absolute;left:209.70px;top:122.00px;width:1.00px;height:412.00px;background:#efefef"></div>
<div style="position:absolute;left:209.70px;top:113.50px;width:1.00px;height:8.50px;background:#363636"></div>
<div style="position:absolute;left:257.00px;top:122.00px;width:1.00px;height:412.00px;background:#efefef"></div>
<div style="position:absolute;left:257.00px;top:113.50px;width:1.00px;height:8.50px;background:#363636"></div>
<div style="position:absolute;left:299.80px;top:122.00px;width:1.00px;height:412.00px;background:#efefef"></div>
<div style="position:absolute;left:299.80px;top:113.50px;width:1.00px;height:8.50px;background:#363636"></div>
<div style="position:absolute;left:342.95px;top:122.00px;width:1.00px;height:412.00px;background:#efefef"></div>
<div style="position:absolute;left:342.95px;top:113.50px;width:1.00px;height:8.50px;background:#363636"></div>
<div style="position:absolute;left:386.10px;top:122.00px;width:1.00px;height:412.00px;background:#efefef"></div>
<div style="position:absolute;left:386.10px;top:113.50px;width:1.00px;height:8.50px;background:#363636"></div>
<div style="position:absolute;left:429.25px;top:122.00px;width:1.00px;height:412.00px;background:#efefef"></div>
<div style="position:absolute;left:429.25px;top:113.50px;width:1.00px;height:8.50px;background:#363636"></div>
<div style="position:absolute;left:472.40px;top:122.00px;width:1.00px;height:412.00px;background:#efefef"></div>
<div style="position:absolute;left:472.40px;top:113.50px;width:1.00px;height:8.50px;background:#363636"></div>
<div style="position:absolute;left:515.55px;top:122.00px;width:1.00px;height:412.00px;background:#efefef"></div>
<div style="position:absolute;left:515.55px;top:113.50px;width:1.00px;height:8.50px;background:#363636"></div>
<div style="position:absolute;left:558.70px;top:122.00px;width:1.00px;height:412.00px;background:#efefef"></div>
<div style="position:absolute;left:558.70px;top:113.50px;width:1.00px;height:8.50px;background:#363636"></div>
<div style="position:absolute;left:601.85px;top:122.00px;width:1.00px;height:412.00px;background:#efefef"></div>
<div style="position:absolute;left:601.85px;top:113.50px;width:1.00px;height:8.50px;background:#363636"></div>
<div style="position:absolute;left:645.00px;top:122.00px;width:1.00px;height:412.00px;background:#efefef"></div>
<div style="position:absolute;left:645.00px;top:113.50px;width:1.00px;height:8.50px;background:#363636"></div>
<div style="position:absolute;left:688.15px;top:122.00px;width:1.00px;height:412.00px;background:#efefef"></div>
<div style="position:absolute;left:688.15px;top:113.50px;width:1.00px;height:8.50px;background:#363636"></div>
<div style="position:absolute;left:731.30px;top:122.00px;width:1.00px;height:412.00px;background:#efefef"></div>
<div style="position:absolute;left:731.30px;top:113.50px;width:1.00px;height:8.50px;background:#363636"></div>
<div style="position:absolute;left:774.45px;top:122.00px;width:1.00px;height:412.00px;background:#efefef"></div>
<div style="position:absolute;left:774.45px;top:113.50px;width:1.00px;height:8.50px;background:#363636"></div>
<div style="position:absolute;left:817.60px;top:122.00px;width:1.00px;height:412.00px;background:#efefef"></div>
<div style="position:absolute;left:817.60px;top:113.50px;width:1.00px;height:8.50px;background:#363636"></div>
<div style="position:absolute;left:860.75px;top:122.00px;width:1.00px;height:412.00px;background:#efefef"></div>
<div style="position:absolute;left:860.75px;top:113.50px;width:1.00px;height:8.50px;background:#363636"></div>
<div style="position:absolute;left:903.90px;top:122.00px;width:1.00px;height:412.00px;background:#efefef"></div>
<div style="position:absolute;left:903.90px;top:113.50px;width:1.00px;height:8.50px;background:#363636"></div>
<div style="position:absolute;left:947.05px;top:122.00px;width:1.00px;height:412.00px;background:#efefef"></div>
<div style="position:absolute;left:947.05px;top:113.50px;width:1.00px;height:8.50px;background:#363636"></div>
<div style="position:absolute;left:990.20px;top:122.00px;width:1.00px;height:412.00px;background:#efefef"></div>
<div style="position:absolute;left:990.20px;top:113.50px;width:1.00px;height:8.50px;background:#363636"></div>
<div style="position:absolute;left:16.00px;top:122.00px;width:284.30px;height:12.03px;background:#5b9bd5"></div>
<div style="position:absolute;left:16.00px;top:134.03px;width:284.30px;height:12.03px;background:#ddebf7"></div>
<div style="position:absolute;left:16.00px;top:146.06px;width:284.30px;height:12.03px;background:#ffffff"></div>
<div style="position:absolute;left:16.00px;top:158.09px;width:284.30px;height:12.03px;background:#ddebf7"></div>
<div style="position:absolute;left:16.00px;top:170.12px;width:284.30px;height:12.03px;background:#ffffff"></div>
<div style="position:absolute;left:16.00px;top:182.15px;width:284.30px;height:12.03px;background:#ddebf7"></div>
<div style="position:absolute;left:16.00px;top:194.18px;width:284.30px;height:12.03px;background:#ffffff"></div>
<div style="position:absolute;left:16.00px;top:206.21px;width:284.30px;height:12.03px;background:#ddebf7"></div>
<div style="position:absolute;left:39.58px;top:114.00px;font-family:'Liberation Sans';font-size:8px;font-weight:normal;font-style:normal;line-height:8px;color:#dedede;white-space:nowrap">A</div>
<div style="position:absolute;left:96.08px;top:114.00px;font-family:'Liberation Sans';font-size:8px;font-weight:normal;font-style:normal;line-height:8px;color:#dedede;white-space:nowrap">B</div>
<div style="position:absolute;left:166.71px;top:114.00px;font-family:'Liberation Sans';font-size:8px;font-weight:normal;font-style:normal;line-height:8px;color:#dedede;white-space:nowrap">C</div>
<div style="position:absolute;left:230.96px;top:114.00px;font-family:'Liberation Sans';font-size:8px;font-weight:normal;font-style:normal;line-height:8px;color:#dedede;white-space:nowrap">D</div>
<div style="position:absolute;left:276.23px;top:114.00px;font-family:'Liberation Sans';font-size:8px;font-weight:normal;font-style:normal;line-height:8px;color:#dedede;white-space:nowrap">E</div>
<div style="position:absolute;left:319.43px;top:114.00px;font-family:'Liberation Sans';font-size:8px;font-weight:normal;font-style:normal;line-height:8px;color:#dedede;white-space:nowrap">F</div>
<div style="position:absolute;left:361.91px;top:114.00px;font-family:'Liberation Sans';font-size:8px;font-weight:normal;font-style:normal;line-height:8px;color:#dedede;white-space:nowrap">G</div>
<div style="position:absolute;left:405.28px;top:114.00px;font-family:'Liberation Sans';font-size:8px;font-weight:normal;font-style:normal;line-height:8px;color:#dedede;white-space:nowrap">H</div>
<div style="position:absolute;left:450.21px;top:114.00px;font-family:'Liberation Sans';font-size:8px;font-weight:normal;font-style:normal;line-height:8px;color:#dedede;white-space:nowrap">I</div>
<div style="position:absolute;left:492.47px;top:114.00px;font-family:'Liberation Sans';font-size:8px;font-weight:normal;font-style:normal;line-height:8px;color:#dedede;white-space:nowrap">J</div>
<div style="position:absolute;left:534.95px;top:114.00px;font-family:'Liberation Sans';font-size:8px;font-weight:normal;font-style:normal;line-height:8px;color:#dedede;white-space:nowrap">K</div>
<div style="position:absolute;left:578.55px;top:114.00px;font-family:'Liberation Sans';font-size:8px;font-weight:normal;font-style:normal;line-height:8px;color:#dedede;white-space:nowrap">L</div>
<div style="position:absolute;left:620.59px;top:114.00px;font-family:'Liberation Sans';font-size:8px;font-weight:normal;font-style:normal;line-height:8px;color:#dedede;white-space:nowrap">M</div>
<div style="position:absolute;left:664.18px;top:114.00px;font-family:'Liberation Sans';font-size:8px;font-weight:normal;font-style:normal;line-height:8px;color:#dedede;white-space:nowrap">N</div>
<div style="position:absolute;left:707.11px;top:114.00px;font-family:'Liberation Sans';font-size:8px;font-weight:normal;font-style:normal;line-height:8px;color:#dedede;white-space:nowrap">O</div>
<div style="position:absolute;left:750.70px;top:114.00px;font-family:'Liberation Sans';font-size:8px;font-weight:normal;font-style:normal;line-height:8px;color:#dedede;white-space:nowrap">P</div>
<div style="position:absolute;left:793.41px;top:114.00px;font-family:'Liberation Sans';font-size:8px;font-weight:normal;font-style:normal;line-height:8px;color:#dedede;white-space:nowrap">Q</div>
<div style="position:absolute;left:836.78px;top:114.00px;font-family:'Liberation Sans';font-size:8px;font-weight:normal;font-style:normal;line-height:8px;color:#dedede;white-space:nowrap">R</div>
<div style="position:absolute;left:880.15px;top:114.00px;font-family:'Liberation Sans';font-size:8px;font-weight:normal;font-style:normal;line-height:8px;color:#dedede;white-space:nowrap">S</div>
<div style="position:absolute;left:923.53px;top:114.00px;font-family:'Liberation Sans';font-size:8px;font-weight:normal;font-style:normal;line-height:8px;color:#dedede;white-space:nowrap">T</div>
<div style="position:absolute;left:966.23px;top:114.00px;font-family:'Liberation Sans';font-size:8px;font-weight:normal;font-style:normal;line-height:8px;color:#dedede;white-space:nowrap">U</div>
<div style="position:absolute;left:1009.60px;top:114.00px;font-family:'Liberation Sans';font-size:8px;font-weight:normal;font-style:normal;line-height:8px;color:#dedede;white-space:nowrap">V</div>
<div style="position:absolute;left:5.53px;top:126.00px;font-family:'Liberation Sans';font-size:7.8px;font-weight:normal;font-style:normal;line-height:7.8px;color:#e2e2e2;white-space:nowrap">1</div>
<div style="position:absolute;left:5.53px;top:138.00px;font-family:'Liberation Sans';font-size:7.8px;font-weight:normal;font-style:normal;line-height:7.8px;color:#e2e2e2;white-space:nowrap">2</div>
<div style="position:absolute;left:5.53px;top:150.00px;font-family:'Liberation Sans';font-size:7.8px;font-weight:normal;font-style:normal;line-height:7.8px;color:#e2e2e2;white-space:nowrap">3</div>
<div style="position:absolute;left:5.53px;top:162.00px;font-family:'Liberation Sans';font-size:7.8px;font-weight:normal;font-style:normal;line-height:7.8px;color:#e2e2e2;white-space:nowrap">4</div>
<div style="position:absolute;left:5.53px;top:174.00px;font-family:'Liberation Sans';font-size:7.8px;font-weight:normal;font-style:normal;line-height:7.8px;color:#e2e2e2;white-space:nowrap">5</div>
<div style="position:absolute;left:5.53px;top:186.00px;font-family:'Liberation Sans';font-size:7.8px;font-weight:normal;font-style:normal;line-height:7.8px;color:#e2e2e2;white-space:nowrap">6</div>
<div style="position:absolute;left:5.53px;top:198.00px;font-family:'Liberation Sans';font-size:7.8px;font-weight:normal;font-style:normal;line-height:7.8px;color:#e2e2e2;white-space:nowrap">7</div>
<div style="position:absolute;left:5.53px;top:210.00px;font-family:'Liberation Sans';font-size:7.8px;font-weight:normal;font-style:normal;line-height:7.8px;color:#e2e2e2;white-space:nowrap">8</div>
<div style="position:absolute;left:5.53px;top:222.00px;font-family:'Liberation Sans';font-size:7.8px;font-weight:normal;font-style:normal;line-height:7.8px;color:#e2e2e2;white-space:nowrap">9</div>
<div style="position:absolute;left:3.36px;top:234.00px;font-family:'Liberation Sans';font-size:7.8px;font-weight:normal;font-style:normal;line-height:7.8px;color:#e2e2e2;white-space:nowrap">10</div>
<div style="position:absolute;left:3.65px;top:246.00px;font-family:'Liberation Sans';font-size:7.8px;font-weight:normal;font-style:normal;line-height:7.8px;color:#e2e2e2;white-space:nowrap">11</div>
<div style="position:absolute;left:3.36px;top:258.00px;font-family:'Liberation Sans';font-size:7.8px;font-weight:normal;font-style:normal;line-height:7.8px;color:#e2e2e2;white-space:nowrap">12</div>
<div style="position:absolute;left:3.36px;top:270.00px;font-family:'Liberation Sans';font-size:7.8px;font-weight:normal;font-style:normal;line-height:7.8px;color:#e2e2e2;white-space:nowrap">13</div>
<div style="position:absolute;left:3.36px;top:282.00px;font-family:'Liberation Sans';font-size:7.8px;font-weight:normal;font-style:normal;line-height:7.8px;color:#e2e2e2;white-space:nowrap">14</div>
<div style="position:absolute;left:3.36px;top:294.00px;font-family:'Liberation Sans';font-size:7.8px;font-weight:normal;font-style:normal;line-height:7.8px;color:#e2e2e2;white-space:nowrap">15</div>
<div style="position:absolute;left:3.36px;top:306.00px;font-family:'Liberation Sans';font-size:7.8px;font-weight:normal;font-style:normal;line-height:7.8px;color:#e2e2e2;white-space:nowrap">16</div>
<div style="position:absolute;left:3.36px;top:318.00px;font-family:'Liberation Sans';font-size:7.8px;font-weight:normal;font-style:normal;line-height:7.8px;color:#e2e2e2;white-space:nowrap">17</div>
<div style="position:absolute;left:3.36px;top:330.00px;font-family:'Liberation Sans';font-size:7.8px;font-weight:normal;font-style:normal;line-height:7.8px;color:#e2e2e2;white-space:nowrap">18</div>
<div style="position:absolute;left:3.36px;top:342.00px;font-family:'Liberation Sans';font-size:7.8px;font-weight:normal;font-style:normal;line-height:7.8px;color:#e2e2e2;white-space:nowrap">19</div>
<div style="position:absolute;left:3.36px;top:354.00px;font-family:'Liberation Sans';font-size:7.8px;font-weight:normal;font-style:normal;line-height:7.8px;color:#e2e2e2;white-space:nowrap">20</div>
<div style="position:absolute;left:3.36px;top:366.00px;font-family:'Liberation Sans';font-size:7.8px;font-weight:normal;font-style:normal;line-height:7.8px;color:#e2e2e2;white-space:nowrap">21</div>
<div style="position:absolute;left:3.36px;top:378.00px;font-family:'Liberation Sans';font-size:7.8px;font-weight:normal;font-style:normal;line-height:7.8px;color:#e2e2e2;white-space:nowrap">22</div>
<div style="position:absolute;left:3.36px;top:390.00px;font-family:'Liberation Sans';font-size:7.8px;font-weight:normal;font-style:normal;line-height:7.8px;color:#e2e2e2;white-space:nowrap">23</div>
<div style="position:absolute;left:3.36px;top:402.00px;font-family:'Liberation Sans';font-size:7.8px;font-weight:normal;font-style:normal;line-height:7.8px;color:#e2e2e2;white-space:nowrap">24</div>
<div style="position:absolute;left:3.36px;top:415.00px;font-family:'Liberation Sans';font-size:7.8px;font-weight:normal;font-style:normal;line-height:7.8px;color:#e2e2e2;white-space:nowrap">25</div>
<div style="position:absolute;left:3.36px;top:427.00px;font-family:'Liberation Sans';font-size:7.8px;font-weight:normal;font-style:normal;line-height:7.8px;color:#e2e2e2;white-space:nowrap">26</div>
<div style="position:absolute;left:3.36px;top:439.00px;font-family:'Liberation Sans';font-size:7.8px;font-weight:normal;font-style:normal;line-height:7.8px;color:#e2e2e2;white-space:nowrap">27</div>
<div style="position:absolute;left:3.36px;top:451.00px;font-family:'Liberation Sans';font-size:7.8px;font-weight:normal;font-style:normal;line-height:7.8px;color:#e2e2e2;white-space:nowrap">28</div>
<div style="position:absolute;left:3.36px;top:463.00px;font-family:'Liberation Sans';font-size:7.8px;font-weight:normal;font-style:normal;line-height:7.8px;color:#e2e2e2;white-space:nowrap">29</div>
<div style="position:absolute;left:3.36px;top:475.00px;font-family:'Liberation Sans';font-size:7.8px;font-weight:normal;font-style:normal;line-height:7.8px;color:#e2e2e2;white-space:nowrap">30</div>
<div style="position:absolute;left:3.36px;top:487.00px;font-family:'Liberation Sans';font-size:7.8px;font-weight:normal;font-style:normal;line-height:7.8px;color:#e2e2e2;white-space:nowrap">31</div>
<div style="position:absolute;left:3.36px;top:499.00px;font-family:'Liberation Sans';font-size:7.8px;font-weight:normal;font-style:normal;line-height:7.8px;color:#e2e2e2;white-space:nowrap">32</div>
<div style="position:absolute;left:3.36px;top:511.00px;font-family:'Liberation Sans';font-size:7.8px;font-weight:normal;font-style:normal;line-height:7.8px;color:#e2e2e2;white-space:nowrap">33</div>
<div style="position:absolute;left:3.36px;top:523.00px;font-family:'Liberation Sans';font-size:7.8px;font-weight:normal;font-style:normal;line-height:7.8px;color:#e2e2e2;white-space:nowrap">34</div>
<div style="position:absolute;left:17.43px;top:125.00px;font-family:'Liberation Sans';font-size:8.8px;font-weight:bold;font-style:normal;line-height:8.8px;color:#ffffff;white-space:nowrap;transform:scaleX(0.9266);transform-origin:0 0;">Employee ID</div>
<div style="position:absolute;left:69.62px;top:125.00px;font-family:'Liberation Sans';font-size:8.8px;font-weight:bold;font-style:normal;line-height:8.8px;color:#ffffff;white-space:nowrap;transform:scaleX(0.9492);transform-origin:0 0;">Name</div>
<div style="position:absolute;left:130.87px;top:125.00px;font-family:'Liberation Sans';font-size:8.8px;font-weight:bold;font-style:normal;line-height:8.8px;color:#ffffff;white-space:nowrap;transform:scaleX(0.9478);transform-origin:0 0;">Title</div>
<div style="position:absolute;left:211.62px;top:125.00px;font-family:'Liberation Sans';font-size:8.8px;font-weight:bold;font-style:normal;line-height:8.8px;color:#ffffff;white-space:nowrap;transform:scaleX(0.9490);transform-origin:0 0;">Manager ID</div>
<div style="position:absolute;left:259.63px;top:125.00px;font-family:'Liberation Sans';font-size:8.8px;font-weight:bold;font-style:normal;line-height:8.8px;color:#ffffff;white-space:nowrap;transform:scaleX(0.9237);transform-origin:0 0;">Role Type</div>
<div style="position:absolute;left:17.45px;top:136.00px;font-family:'Liberation Sans';font-size:9.8px;font-weight:normal;font-style:normal;line-height:9.8px;color:#1c1c1c;white-space:nowrap;transform:scaleX(0.8004);transform-origin:0 0;-webkit-text-stroke:0.25px #1c1c1c">ID1</div>
<div style="position:absolute;left:69.63px;top:136.00px;font-family:'Liberation Sans';font-size:9.8px;font-weight:normal;font-style:normal;line-height:9.8px;color:#1c1c1c;white-space:nowrap;transform:scaleX(0.8368);transform-origin:0 0;-webkit-text-stroke:0.25px #1c1c1c">Bianca Toscano</div>
<div style="position:absolute;left:130.85px;top:136.00px;font-family:'Liberation Sans';font-size:9.8px;font-weight:normal;font-style:normal;line-height:9.8px;color:#1c1c1c;white-space:nowrap;transform:scaleX(0.8978);transform-origin:0 0;-webkit-text-stroke:0.25px #1c1c1c">Director</div>
<div style="position:absolute;left:259.63px;top:136.00px;font-family:'Liberation Sans';font-size:9.8px;font-weight:normal;font-style:normal;line-height:9.8px;color:#1c1c1c;white-space:nowrap;transform:scaleX(0.8413);transform-origin:0 0;-webkit-text-stroke:0.25px #1c1c1c">Executive</div>
<div style="position:absolute;left:17.45px;top:148.00px;font-family:'Liberation Sans';font-size:9.8px;font-weight:normal;font-style:normal;line-height:9.8px;color:#1c1c1c;white-space:nowrap;transform:scaleX(0.8004);transform-origin:0 0;-webkit-text-stroke:0.25px #1c1c1c">ID2</div>
<div style="position:absolute;left:69.62px;top:148.00px;font-family:'Liberation Sans';font-size:9.8px;font-weight:normal;font-style:normal;line-height:9.8px;color:#1c1c1c;white-space:nowrap;transform:scaleX(0.8506);transform-origin:0 0;-webkit-text-stroke:0.25px #1c1c1c">Aasa Andrejev</div>
<div style="position:absolute;left:130.86px;top:148.00px;font-family:'Liberation Sans';font-size:9.8px;font-weight:normal;font-style:normal;line-height:9.8px;color:#1c1c1c;white-space:nowrap;transform:scaleX(0.8896);transform-origin:0 0;-webkit-text-stroke:0.25px #1c1c1c">Manager, Marketing</div>
<div style="position:absolute;left:211.65px;top:148.00px;font-family:'Liberation Sans';font-size:9.8px;font-weight:normal;font-style:normal;line-height:9.8px;color:#1c1c1c;white-space:nowrap;transform:scaleX(0.8004);transform-origin:0 0;-webkit-text-stroke:0.25px #1c1c1c">ID1</div>
<div style="position:absolute;left:259.61px;top:148.00px;font-family:'Liberation Sans';font-size:9.8px;font-weight:normal;font-style:normal;line-height:9.8px;color:#1c1c1c;white-space:nowrap;transform:scaleX(0.8732);transform-origin:0 0;-webkit-text-stroke:0.25px #1c1c1c">Manager</div>
<div style="position:absolute;left:17.45px;top:160.00px;font-family:'Liberation Sans';font-size:9.8px;font-weight:normal;font-style:normal;line-height:9.8px;color:#1c1c1c;white-space:nowrap;transform:scaleX(0.8004);transform-origin:0 0;-webkit-text-stroke:0.25px #1c1c1c">ID3</div>
<div style="position:absolute;left:69.63px;top:160.00px;font-family:'Liberation Sans';font-size:9.8px;font-weight:normal;font-style:normal;line-height:9.8px;color:#1c1c1c;white-space:nowrap;transform:scaleX(0.8347);transform-origin:0 0;-webkit-text-stroke:0.25px #1c1c1c">Paul Lehmus</div>
<div style="position:absolute;left:130.86px;top:160.00px;font-family:'Liberation Sans';font-size:9.8px;font-weight:normal;font-style:normal;line-height:9.8px;color:#1c1c1c;white-space:nowrap;transform:scaleX(0.8753);transform-origin:0 0;-webkit-text-stroke:0.25px #1c1c1c">Content owner</div>
<div style="position:absolute;left:211.65px;top:160.00px;font-family:'Liberation Sans';font-size:9.8px;font-weight:normal;font-style:normal;line-height:9.8px;color:#1c1c1c;white-space:nowrap;transform:scaleX(0.8004);transform-origin:0 0;-webkit-text-stroke:0.25px #1c1c1c">ID2</div>
<div style="position:absolute;left:259.61px;top:160.00px;font-family:'Liberation Sans';font-size:9.8px;font-weight:normal;font-style:normal;line-height:9.8px;color:#1c1c1c;white-space:nowrap;transform:scaleX(0.8899);transform-origin:0 0;-webkit-text-stroke:0.25px #1c1c1c">Staff</div>
<div style="position:absolute;left:17.45px;top:172.00px;font-family:'Liberation Sans';font-size:9.8px;font-weight:normal;font-style:normal;line-height:9.8px;color:#1c1c1c;white-space:nowrap;transform:scaleX(0.8004);transform-origin:0 0;-webkit-text-stroke:0.25px #1c1c1c">ID4</div>
<div style="position:absolute;left:69.63px;top:172.00px;font-family:'Liberation Sans';font-size:9.8px;font-weight:normal;font-style:normal;line-height:9.8px;color:#1c1c1c;white-space:nowrap;transform:scaleX(0.8394);transform-origin:0 0;-webkit-text-stroke:0.25px #1c1c1c">Sergio Udinese</div>
<div style="position:absolute;left:130.88px;top:172.00px;font-family:'Liberation Sans';font-size:9.8px;font-weight:normal;font-style:normal;line-height:9.8px;color:#1c1c1c;white-space:nowrap;transform:scaleX(0.8440);transform-origin:0 0;-webkit-text-stroke:0.25px #1c1c1c">PR Coordinator</div>
<div style="position:absolute;left:211.65px;top:172.00px;font-family:'Liberation Sans';font-size:9.8px;font-weight:normal;font-style:normal;line-height:9.8px;color:#1c1c1c;white-space:nowrap;transform:scaleX(0.8004);transform-origin:0 0;-webkit-text-stroke:0.25px #1c1c1c">ID2</div>
<div style="position:absolute;left:259.61px;top:172.00px;font-family:'Liberation Sans';font-size:9.8px;font-weight:normal;font-style:normal;line-height:9.8px;color:#1c1c1c;white-space:nowrap;transform:scaleX(0.8899);transform-origin:0 0;-webkit-text-stroke:0.25px #1c1c1c">Staff</div>
<div style="position:absolute;left:17.44px;top:184.00px;font-family:'Liberation Sans';font-size:9.8px;font-weight:normal;font-style:normal;line-height:9.8px;color:#1c1c1c;white-space:nowrap;transform:scaleX(0.8178);transform-origin:0 0;-webkit-text-stroke:0.25px #1c1c1c">ID6</div>
<div style="position:absolute;left:69.60px;top:184.00px;font-family:'Liberation Sans';font-size:9.8px;font-weight:normal;font-style:normal;line-height:9.8px;color:#1c1c1c;white-space:nowrap;transform:scaleX(0.9063);transform-origin:0 0;-webkit-text-stroke:0.25px #1c1c1c">Mai Aare</div>
<div style="position:absolute;left:130.87px;top:184.00px;font-family:'Liberation Sans';font-size:9.8px;font-weight:normal;font-style:normal;line-height:9.8px;color:#1c1c1c;white-space:nowrap;transform:scaleX(0.8666);transform-origin:0 0;-webkit-text-stroke:0.25px #1c1c1c">Manager, Products</div>
<div style="position:absolute;left:211.65px;top:184.00px;font-family:'Liberation Sans';font-size:9.8px;font-weight:normal;font-style:normal;line-height:9.8px;color:#1c1c1c;white-space:nowrap;transform:scaleX(0.8004);transform-origin:0 0;-webkit-text-stroke:0.25px #1c1c1c">ID1</div>
<div style="position:absolute;left:259.61px;top:184.00px;font-family:'Liberation Sans';font-size:9.8px;font-weight:normal;font-style:normal;line-height:9.8px;color:#1c1c1c;white-space:nowrap;transform:scaleX(0.8732);transform-origin:0 0;-webkit-text-stroke:0.25px #1c1c1c">Manager</div>
<div style="position:absolute;left:17.45px;top:196.00px;font-family:'Liberation Sans';font-size:9.8px;font-weight:normal;font-style:normal;line-height:9.8px;color:#1c1c1c;white-space:nowrap;transform:scaleX(0.8004);transform-origin:0 0;-webkit-text-stroke:0.25px #1c1c1c">ID7</div>
<div style="position:absolute;left:69.62px;top:196.00px;font-family:'Liberation Sans';font-size:9.8px;font-weight:normal;font-style:normal;line-height:9.8px;color:#1c1c1c;white-space:nowrap;transform:scaleX(0.8567);transform-origin:0 0;-webkit-text-stroke:0.25px #1c1c1c">Aet Kangro</div>
<div style="position:absolute;left:130.89px;top:196.00px;font-family:'Liberation Sans';font-size:9.8px;font-weight:normal;font-style:normal;line-height:9.8px;color:#1c1c1c;white-space:nowrap;transform:scaleX(0.8174);transform-origin:0 0;-webkit-text-stroke:0.25px #1c1c1c">Design Lead</div>
<div style="position:absolute;left:211.64px;top:196.00px;font-family:'Liberation Sans';font-size:9.8px;font-weight:normal;font-style:normal;line-height:9.8px;color:#1c1c1c;white-space:nowrap;transform:scaleX(0.8178);transform-origin:0 0;-webkit-text-stroke:0.25px #1c1c1c">ID6</div>
<div style="position:absolute;left:259.61px;top:196.00px;font-family:'Liberation Sans';font-size:9.8px;font-weight:normal;font-style:normal;line-height:9.8px;color:#1c1c1c;white-space:nowrap;transform:scaleX(0.8899);transform-origin:0 0;-webkit-text-stroke:0.25px #1c1c1c">Staff</div>
<div style="position:absolute;left:17.45px;top:208.00px;font-family:'Liberation Sans';font-size:9.8px;font-weight:normal;font-style:normal;line-height:9.8px;color:#1c1c1c;white-space:nowrap;transform:scaleX(0.8004);transform-origin:0 0;-webkit-text-stroke:0.25px #1c1c1c">ID8</div>
<div style="position:absolute;left:69.59px;top:208.00px;font-family:'Liberation Sans';font-size:9.8px;font-weight:normal;font-style:normal;line-height:9.8px;color:#1c1c1c;white-space:nowrap;transform:scaleX(0.9193);transform-origin:0 0;-webkit-text-stroke:0.25px #1c1c1c">Aili Mihhailov</div>
<div style="position:absolute;left:130.88px;top:208.00px;font-family:'Liberation Sans';font-size:9.8px;font-weight:normal;font-style:normal;line-height:9.8px;color:#1c1c1c;white-space:nowrap;transform:scaleX(0.8330);transform-origin:0 0;-webkit-text-stroke:0.25px #1c1c1c">Engineering Lead</div>
<div style="position:absolute;left:211.64px;top:208.00px;font-family:'Liberation Sans';font-size:9.8px;font-weight:normal;font-style:normal;line-height:9.8px;color:#1c1c1c;white-space:nowrap;transform:scaleX(0.8178);transform-origin:0 0;-webkit-text-stroke:0.25px #1c1c1c">ID6</div>
<div style="position:absolute;left:259.61px;top:208.00px;font-family:'Liberation Sans';font-size:9.8px;font-weight:normal;font-style:normal;line-height:9.8px;color:#1c1c1c;white-space:nowrap;transform:scaleX(0.8899);transform-origin:0 0;-webkit-text-stroke:0.25px #1c1c1c">Staff</div>
<svg style="position:absolute;left:296px;top:214px" width="5" height="5"><path d="M4.5 0.5 L4.5 4.5 L0.5 4.5 Z" fill="#3a5fb0"/></svg>
<div style="position:absolute;left:42.25px;top:136.30px;width:66.15px;height:48.50px;background:#fbfbe2;border:1px solid #cfcfb8;box-sizing:border-box"></div>
<div style="position:absolute;left:45.26px;top:140.00px;font-family:'Liberation Sans';font-size:8.2px;font-weight:bold;font-style:normal;line-height:8.2px;color:#2a2a2a;white-space:nowrap;transform:scaleX(0.9170);transform-origin:0 0;">Employee ID</div>
<div style="position:absolute;left:45.26px;top:151.00px;font-family:'Liberation Sans';font-size:8px;font-weight:normal;font-style:normal;line-height:8px;color:#555;white-space:nowrap;transform:scaleX(0.9554);transform-origin:0 0;">Enter a unique ID</div>
<div style="position:absolute;left:45.44px;top:161.00px;font-family:'Liberation Sans';font-size:8px;font-weight:normal;font-style:normal;line-height:8px;color:#555;white-space:nowrap;transform:scaleX(0.9898);transform-origin:0 0;">for each</div>
<div style="position:absolute;left:45.45px;top:171.00px;font-family:'Liberation Sans';font-size:8px;font-weight:normal;font-style:normal;line-height:8px;color:#555;white-space:nowrap;transform:scaleX(0.9696);transform-origin:0 0;">employee.</div>
<div style="position:absolute;left:350.30px;top:235.50px;width:462.70px;height:283.90px;background:#fff;border:1px solid #e4e4e4;box-sizing:border-box;box-shadow:0 0 1.5px rgba(0,0,0,0.08)"></div>
<div style="position:absolute;left:351.00px;top:258.70px;width:461.00px;height:1.00px;background:#ececec"></div>
<div style="position:absolute;left:351.00px;top:504.50px;width:465.00px;height:1.00px;background:#e8e8e8"></div>
<div style="position:absolute;left:374.51px;top:244.00px;font-family:'Liberation Sans';font-size:9.6px;font-weight:normal;font-style:normal;line-height:9.6px;color:#555;white-space:nowrap;transform:scaleX(0.9118);transform-origin:0 0;">Edit</div>
<div style="position:absolute;left:413.42px;top:244.00px;font-family:'Liberation Sans';font-size:9.6px;font-weight:normal;font-style:normal;line-height:9.6px;color:#555;white-space:nowrap;transform:scaleX(0.8708);transform-origin:0 0;">Refresh</div>
<svg style="position:absolute;left:359px;top:242px" width="13" height="12" viewBox="0 0 13 12"><path d="M2 10.4 L2.8 7.8 L9.2 1.4 L10.9 3.1 L4.5 9.5 Z" stroke="#8490d8" stroke-width="1.3" fill="#c9cdf0" stroke-linejoin="round"/></svg>
<svg style="position:absolute;left:398.2px;top:242px" width="12" height="12" viewBox="0 0 12 12"><path d="M7.6 2.4 A4 4 0 1 1 4.3 2.3" stroke="#7c88d6" stroke-width="1.1" fill="none"/><path d="M3.6 1.2 L4.7 2.6 L3.2 3.6" stroke="#7c88d6" stroke-width="0.9" fill="none"/></svg>
<div style="position:absolute;left:456.30px;top:247.00px;width:1.30px;height:1.30px;background:#8c92c0;border-radius:50%"></div>
<div style="position:absolute;left:459.50px;top:247.00px;width:1.30px;height:1.30px;background:#8c92c0;border-radius:50%"></div>
<div style="position:absolute;left:462.70px;top:247.00px;width:1.30px;height:1.30px;background:#8c92c0;border-radius:50%"></div>
<div style="position:absolute;left:366.40px;top:343.20px;width:432.20px;height:78.20px;border:1px solid #b3c8ee;box-sizing:border-box"></div>
<div style="position:absolute;left:547.80px;top:348.00px;width:68.80px;height:16.30px;border:1px solid #d3e0f3;background:#fff;box-sizing:border-box"></div>
<div style="position:absolute;left:547.80px;top:348.00px;width:2.20px;height:16.30px;background:#4a86d8"></div>
<div style="position:absolute;left:553.01px;top:351.00px;font-family:'Liberation Sans';font-size:5.2px;font-weight:bold;font-style:normal;line-height:5.2px;color:#111111;white-space:nowrap;transform:scaleX(0.8167);transform-origin:0 0;">Bianca Toscano</div>
<div style="position:absolute;left:552.98px;top:356.00px;font-family:'Liberation Sans';font-size:5.2px;font-weight:normal;font-style:normal;line-height:5.2px;color:#6e6e6e;white-space:nowrap;transform:scaleX(0.9320);transform-origin:0 0;">Director</div>
<div style="position:absolute;left:434.00px;top:373.30px;width:68.70px;height:16.10px;border:1px solid #dbe7d2;background:#fff;box-sizing:border-box"></div>
<div style="position:absolute;left:434.00px;top:373.30px;width:2.20px;height:16.10px;background:#6cb24a"></div>
<div style="position:absolute;left:438.70px;top:376.00px;font-family:'Liberation Sans';font-size:5.2px;font-weight:bold;font-style:normal;line-height:5.2px;color:#111111;white-space:nowrap;transform:scaleX(0.8505);transform-origin:0 0;">Aasa Andrejev</div>
<div style="position:absolute;left:438.69px;top:381.00px;font-family:'Liberation Sans';font-size:5.2px;font-weight:normal;font-style:normal;line-height:5.2px;color:#6e6e6e;white-space:nowrap;transform:scaleX(0.9187);transform-origin:0 0;">Manager, Marketing</div>
<div style="position:absolute;left:662.40px;top:373.30px;width:68.30px;height:16.10px;border:1px solid #dbe7d2;background:#fff;box-sizing:border-box"></div>
<div style="position:absolute;left:662.40px;top:373.30px;width:2.20px;height:16.10px;background:#6cb24a"></div>
<div style="position:absolute;left:667.18px;top:376.00px;font-family:'Liberation Sans';font-size:5.2px;font-weight:bold;font-style:normal;line-height:5.2px;color:#111111;white-space:nowrap;transform:scaleX(0.9204);transform-origin:0 0;">Mai Aare</div>
<div style="position:absolute;left:667.19px;top:381.00px;font-family:'Liberation Sans';font-size:5.2px;font-weight:normal;font-style:normal;line-height:5.2px;color:#6e6e6e;white-space:nowrap;transform:scaleX(0.8960);transform-origin:0 0;">Manager, Products</div>
<div style="position:absolute;left:370.30px;top:399.00px;width:69.20px;height:16.70px;border:1px solid #d3e0f3;background:#fff;box-sizing:border-box"></div>
<div style="position:absolute;left:370.30px;top:399.00px;width:2.20px;height:16.70px;background:#4a86d8"></div>
<div style="position:absolute;left:375.31px;top:402.00px;font-family:'Liberation Sans';font-size:5.2px;font-weight:bold;font-style:normal;line-height:5.2px;color:#111111;white-space:nowrap;transform:scaleX(0.8294);transform-origin:0 0;">Paul Lehmus</div>
<div style="position:absolute;left:375.28px;top:407.00px;font-family:'Liberation Sans';font-size:5.2px;font-weight:normal;font-style:normal;line-height:5.2px;color:#6e6e6e;white-space:nowrap;transform:scaleX(0.9224);transform-origin:0 0;">Content owner</div>
<div style="position:absolute;left:496.90px;top:399.00px;width:68.70px;height:16.70px;border:1px solid #d3e0f3;background:#fff;box-sizing:border-box"></div>
<div style="position:absolute;left:496.90px;top:399.00px;width:2.20px;height:16.70px;background:#4a86d8"></div>
<div style="position:absolute;left:502.01px;top:402.00px;font-family:'Liberation Sans';font-size:5.2px;font-weight:bold;font-style:normal;line-height:5.2px;color:#111111;white-space:nowrap;transform:scaleX(0.8258);transform-origin:0 0;">Sergio Udinese</div>
<div style="position:absolute;left:502.00px;top:407.00px;font-family:'Liberation Sans';font-size:5.2px;font-weight:normal;font-style:normal;line-height:5.2px;color:#6e6e6e;white-space:nowrap;transform:scaleX(0.8726);transform-origin:0 0;">PR Coordinator</div>
<div style="position:absolute;left:599.00px;top:399.00px;width:68.30px;height:16.70px;border:1px solid #d3e0f3;background:#fff;box-sizing:border-box"></div>
<div style="position:absolute;left:599.00px;top:399.00px;width:2.20px;height:16.70px;background:#4a86d8"></div>
<div style="position:absolute;left:603.80px;top:402.00px;font-family:'Liberation Sans';font-size:5.2px;font-weight:bold;font-style:normal;line-height:5.2px;color:#111111;white-space:nowrap;transform:scaleX(0.8363);transform-origin:0 0;">Aet Kangro</div>
<div style="position:absolute;left:603.80px;top:407.00px;font-family:'Liberation Sans';font-size:5.2px;font-weight:normal;font-style:normal;line-height:5.2px;color:#6e6e6e;white-space:nowrap;transform:scaleX(0.8614);transform-origin:0 0;">Design Lead</div>
<div style="position:absolute;left:725.80px;top:399.00px;width:67.90px;height:16.70px;border:1px solid #d3e0f3;background:#fff;box-sizing:border-box"></div>
<div style="position:absolute;left:725.80px;top:399.00px;width:2.20px;height:16.70px;background:#4a86d8"></div>
<div style="position:absolute;left:730.53px;top:402.00px;font-family:'Liberation Sans';font-size:5.2px;font-weight:bold;font-style:normal;line-height:5.2px;color:#111111;white-space:nowrap;transform:scaleX(0.7188);transform-origin:0 0;">Aili Mihhailov</div>
<div style="position:absolute;left:730.50px;top:407.00px;font-family:'Liberation Sans';font-size:5.2px;font-weight:normal;font-style:normal;line-height:5.2px;color:#6e6e6e;white-space:nowrap;transform:scaleX(0.8755);transform-origin:0 0;">Engineering Lead</div>
<div style="position:absolute;left:582.10px;top:364.30px;width:1.00px;height:16.90px;background:#5577c8"></div>
<div style="position:absolute;left:503.00px;top:380.70px;width:159.00px;height:1.00px;background:#5577c8"></div>
<svg style="position:absolute;left:503.0px;top:378.7px" width="4" height="5"><path d="M0 2.5 L4 0.3 L4 4.7 Z" fill="#5577c8"/></svg>
<svg style="position:absolute;left:658.2px;top:378.7px" width="4" height="5"><path d="M4 2.5 L0 0.3 L0 4.7 Z" fill="#5577c8"/></svg>
<div style="position:absolute;left:467.90px;top:389.40px;width:1.00px;height:17.80px;background:#5577c8"></div>
<div style="position:absolute;left:439.80px;top:406.70px;width:57.00px;height:1.00px;background:#5577c8"></div>
<svg style="position:absolute;left:439.8px;top:404.7px" width="4" height="5"><path d="M0 2.5 L4 0.3 L4 4.7 Z" fill="#5577c8"/></svg>
<svg style="position:absolute;left:492.8px;top:404.7px" width="4" height="5"><path d="M4 2.5 L0 0.3 L0 4.7 Z" fill="#5577c8"/></svg>
<div style="position:absolute;left:695.80px;top:389.40px;width:1.00px;height:18.00px;background:#5577c8"></div>
<div style="position:absolute;left:667.60px;top:406.90px;width:58.00px;height:1.00px;background:#5577c8"></div>
<svg style="position:absolute;left:667.6px;top:404.9px" width="4" height="5"><path d="M0 2.5 L4 0.3 L4 4.7 Z" fill="#5577c8"/></svg>
<svg style="position:absolute;left:721.6px;top:404.9px" width="4" height="5"><path d="M4 2.5 L0 0.3 L0 4.7 Z" fill="#5577c8"/></svg>
<div style="position:absolute;left:673.50px;top:511.30px;width:3.00px;height:1.20px;background:#333"></div>
<div style="position:absolute;left:685.80px;top:511.20px;width:63.60px;height:0.80px;background:#555"></div>
<div style="position:absolute;left:694.00px;top:508.00px;width:1.80px;height:7.50px;background:#333"></div>
<div style="position:absolute;left:717.40px;top:510.00px;width:0.80px;height:3.20px;background:#666"></div>
<svg style="position:absolute;left:757.5px;top:508.5px" width="7" height="7"><path d="M0.6 3.3 H6.2 M3.4 0.5 V6.1" stroke="#333" stroke-width="1.2"/></svg>
<div style="position:absolute;left:771.41px;top:509.00px;font-family:'Liberation Sans';font-size:7.2px;font-weight:normal;font-style:normal;line-height:7.2px;color:#3a3a3a;white-space:nowrap;transform:scaleX(0.9096);transform-origin:0 0;">59%</div>
<svg style="position:absolute;left:795px;top:508.4px" width="9" height="8.2"><rect x="0.5" y="0.5" width="3.4" height="3.2" fill="none" stroke="#7a9ad0" stroke-width="0.9"/><rect x="5" y="0.5" width="3.4" height="3.2" fill="none" stroke="#7a9ad0" stroke-width="0.9"/><rect x="0.5" y="4.6" width="3.4" height="3.2" fill="none" stroke="#7a9ad0" stroke-width="0.9"/><rect x="5" y="4.6" width="3.4" height="3.2" fill="none" stroke="#7a9ad0" stroke-width="0.9"/></svg>
<svg style="position:absolute;left:4px;top:53px" width="13" height="12" viewBox="0 0 13 12"><path d="M6.5 0.5 L8.5 2.5 L4.5 2.5 Z M6.5 11.5 L8.5 9.5 L4.5 9.5 Z M0.5 6 L2.5 4 L2.5 8 Z M12.5 6 L10.5 4 L10.5 8 Z" fill="#3d8fd8"/><rect x="3.5" y="3" width="6" height="6" fill="#d8d8d8" stroke="#999" stroke-width="0.6"/><path d="M3.5 5 H9.5 M3.5 7 H9.5 M5.5 3 V9 M7.5 3 V9" stroke="#777" stroke-width="0.5"/></svg>
<svg style="position:absolute;left:74.4px;top:23px" width="11" height="11" viewBox="0 0 11 11"><rect x="0.5" y="0.5" width="10" height="10" fill="#4a4a4a" stroke="#9a9a9a"/><rect x="3.5" y="3.5" width="6" height="6" fill="#1f5ea8"/><path d="M5 4.5 V9 M5 4.5 L8 9 V4.5" stroke="#111" stroke-width="0.9" fill="none"/></svg>
<svg style="position:absolute;left:75.6px;top:38px" width="10" height="11" viewBox="0 0 10 11"><rect x="0.5" y="0.5" width="6.5" height="3" fill="#3b8ee0"/><rect x="0.5" y="4.5" width="6.5" height="1" fill="#cfcfcf"/><rect x="0.5" y="6.5" width="5" height="4" fill="#3b8ee0"/><path d="M6 6.5 L9.5 10.5 M9.5 6.5 L6 10.5" stroke="#e0403a" stroke-width="1.1"/></svg>
<svg style="position:absolute;left:74.4px;top:53.6px" width="12" height="11" viewBox="0 0 12 11"><rect x="2.5" y="0.5" width="6" height="4.5" fill="none" stroke="#cfcfcf" stroke-width="0.9"/><rect x="5" y="5.5" width="6.5" height="5" fill="#3b8ee0"/><path d="M1 2 V8.5 H4" stroke="#3b8ee0" stroke-width="1.1" fill="none"/></svg>
<svg style="position:absolute;left:185.5px;top:23.5px" width="21" height="20" viewBox="0 0 21 20"><rect x="0.7" y="0.7" width="18" height="17.5" fill="none" stroke="#cfcfcf" stroke-width="1.1"/><rect x="2.6" y="5" width="14" height="3" fill="#3b8ee0"/><rect x="2.6" y="10" width="8" height="1.2" fill="#bdbdbd"/><rect x="2.6" y="13" width="8" height="1.2" fill="#bdbdbd"/><path d="M11.5 10.5 H20 L16.8 14.2 V19 L14.8 17.8 V14.2 Z" fill="#302f2e" stroke="#cfcfcf" stroke-width="1"/></svg>
<svg style="position:absolute;left:222px;top:23.5px" width="22" height="20" viewBox="0 0 22 20"><rect x="0.7" y="0.7" width="18.5" height="17" fill="none" stroke="#cfcfcf" stroke-width="1.1"/><path d="M0.7 5 H19.2 M0.7 9.3 H19.2 M0.7 13.5 H19.2 M6.8 0.7 V17.7 M12.9 0.7 V17.7" stroke="#cfcfcf" stroke-width="0.9"/><path d="M9.5 15 H20 M17 12 L20.3 15 L17 18" stroke="#3b8ee0" stroke-width="1.3" fill="none"/></svg>
<svg style="position:absolute;left:229.5px;top:58px" width="5" height="4"><path d="M0.6 0.8 L2.5 2.8 L4.4 0.8" stroke="#d0d0d0" stroke-width="0.9" fill="none"/></svg>
<svg style="position:absolute;left:251px;top:23.5px" width="20" height="20" viewBox="0 0 20 20"><path d="M9 18 H0.8 V0.8 H9.5 L13.5 4.8 V8 M9.5 0.8 V4.8 H13.5" stroke="#cfcfcf" stroke-width="1.1" fill="none"/><path d="M17.5 13.5 A4.2 4.2 0 1 1 16 10" stroke="#cfcfcf" stroke-width="1.2" fill="none"/><path d="M16.5 8 L16.3 10.5 L13.8 10.2" stroke="#cfcfcf" stroke-width="1" fill="none"/></svg>
<svg style="position:absolute;left:256.8px;top:58px" width="5" height="4"><path d="M0.6 0.8 L2.5 2.8 L4.4 0.8" stroke="#d0d0d0" stroke-width="0.9" fill="none"/></svg>
<svg style="position:absolute;left:275.5px;top:23.5px" width="9" height="11" viewBox="0 0 9 11"><rect x="0.5" y="0.5" width="7.5" height="10" fill="none" stroke="#7a7a7a" stroke-width="0.9"/><path d="M2.5 3 H6 M2.5 5.5 H6 M2.5 8 H6" stroke="#7a7a7a" stroke-width="0.8"/></svg>
<svg style="position:absolute;left:275px;top:38px" width="10" height="11" viewBox="0 0 10 11"><rect x="0.5" y="0.5" width="9" height="10" fill="none" stroke="#7a7a7a" stroke-width="0.9"/><path d="M0.5 3 H9.5 M4 3 V10.5" stroke="#7a7a7a" stroke-width="0.8"/><circle cx="6.5" cy="7" r="2" fill="none" stroke="#7a7a7a" stroke-width="0.8"/></svg>
<svg style="position:absolute;left:275px;top:54px" width="11" height="10" viewBox="0 0 11 10"><path d="M4 2 H1 V6 H4 M7 4 H10 V8 H7" stroke="#7a7a7a" stroke-width="1" fill="none"/><path d="M7 0 V3 M4 7 V10" stroke="#7a7a7a" stroke-width="0.8"/></svg>
<svg style="position:absolute;left:869px;top:26.5px" width="7" height="5"><path d="M0.8 4 L3.5 1.2 L6.2 4" stroke="#d8d8d8" stroke-width="1.1" fill="none"/></svg>
<svg style="position:absolute;left:869px;top:40px" width="7" height="5"><path d="M0.8 1 L3.5 3.8 L6.2 1" stroke="#d8d8d8" stroke-width="1.1" fill="none"/></svg>
<svg style="position:absolute;left:869px;top:51px" width="7" height="6"><path d="M0.5 1 H6.5" stroke="#d8d8d8" stroke-width="1"/><path d="M0.8 2.6 L3.5 5.2 L6.2 2.6 Z" fill="#d8d8d8"/></svg>
<svg style="position:absolute;left:1011.5px;top:73.5px" width="8" height="5"><path d="M0.8 4 L4 1 L7.2 4" stroke="#d8d8d8" stroke-width="1.1" fill="none"/></svg>
<svg style="position:absolute;left:99.5px;top:93.5px" width="6" height="4"><path d="M0.5 0.5 H5.5 L3 3.5 Z" fill="#d8d8d8"/></svg>
<div style="position:absolute;left:117.90px;top:91.90px;width:1.50px;height:1.40px;background:#c8c8c8;border-radius:50%"></div>
<div style="position:absolute;left:117.90px;top:94.80px;width:1.50px;height:1.40px;background:#c8c8c8;border-radius:50%"></div>
<div style="position:absolute;left:117.90px;top:97.70px;width:1.50px;height:1.40px;background:#c8c8c8;border-radius:50%"></div>
<svg style="position:absolute;left:136px;top:91px" width="8" height="8"><path d="M1 1 L7 7 M7 1 L1 7" stroke="#767676" stroke-width="1.4"/></svg>
<svg style="position:absolute;left:158px;top:91px" width="10" height="8"><path d="M1 4.2 L3.6 6.8 L9 1.2" stroke="#767676" stroke-width="1.5" fill="none"/></svg>
<div style="position:absolute;left:180.37px;top:91.00px;font-family:'Liberation Serif';font-size:9.5px;font-weight:normal;font-style:italic;line-height:9.5px;color:#cfcfcf;white-space:nowrap;transform:scaleX(1.4656);transform-origin:0 0;">fx</div>
<svg style="position:absolute;left:1011.2px;top:92.8px" width="8" height="6"><path d="M1 1.2 L4 4.2 L7 1.2" stroke="#f0f0f0" stroke-width="1.6" fill="none"/></svg>
<svg style="position:absolute;left:910px;top:5.5px" width="8" height="8" viewBox="0 0 8 8"><path d="M0.6 3.5 V7.4 H7.2 V5" stroke="#cfcfcf" stroke-width="0.9" fill="none"/><path d="M2.2 6 C2.5 3.5 4 2.6 6 2.6 M4.8 0.8 L6.8 2.6 L4.8 4.4" stroke="#cfcfcf" stroke-width="0.9" fill="none"/></svg>
<svg style="position:absolute;left:958.5px;top:5.5px" width="8" height="8" viewBox="0 0 8 8"><path d="M0.6 0.6 H7.4 V5.6 H2.8 L1.2 7.4 V5.6 H0.6 Z" stroke="#cfcfcf" stroke-width="0.9" fill="none"/></svg>
<svg style="position:absolute;left:5px;top:112.5px" width="11" height="9"><path d="M10.5 0.5 V8.5 H0.5 Z" fill="#5a5a5a"/></svg>
<svg style="position:absolute;left:1014.5px;top:113.5px" width="7" height="5"><path d="M0.5 4 L3.5 1 L6.5 4 Z" fill="#9a9a9a"/></svg>
<svg style="position:absolute;left:113.5px;top:48.8px" width="9" height="10" viewBox="0 0 9 10"><path d="M0.6 0.6 V8.4 L2.6 6.6 L4.2 9.4 L5.4 8.8 L4 6.1 H6.8 Z" fill="#f4f4f4" stroke="#222" stroke-width="0.6"/></svg>
</div></body></html>
